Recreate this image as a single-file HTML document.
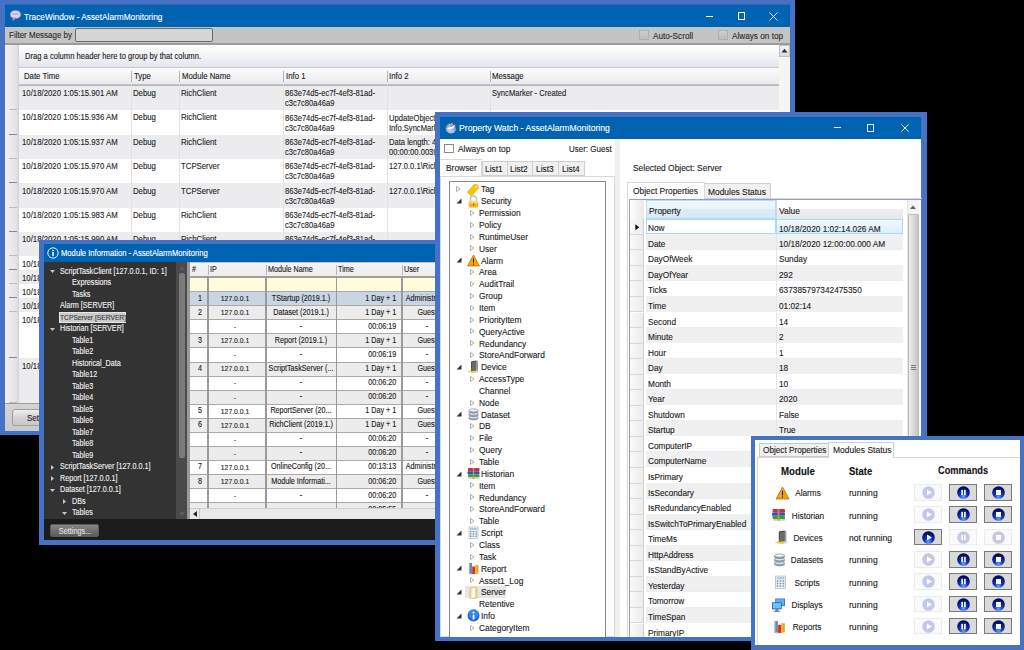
<!DOCTYPE html><html><head><meta charset="utf-8"><style>
html,body{margin:0;padding:0;}
body{width:1024px;height:650px;overflow:hidden;background:#000;position:relative;font-family:"Liberation Sans",sans-serif;}
body div, body svg{position:absolute;}
.t{white-space:nowrap;-webkit-text-stroke:0.12px currentColor;}
</style></head><body><div style="left:0px;top:0px;width:795px;height:434.6px;background:#4672c6"></div>
<div style="left:5px;top:5px;width:785px;height:21.5px;background:#0063b1"></div>
<div style="left:5px;top:4.2px;width:785px;height:1px;background:#3d62a8"></div>
<svg style="left:9px;top:9px" width="13" height="13" viewBox="0 0 13 13"><ellipse cx="6.5" cy="5.5" rx="5.5" ry="4.3" fill="#d8d4f0" stroke="#6a6890" stroke-width="0.8"/><path d="M4 9 L3.5 12 L7 9.3Z" fill="#d8d4f0" stroke="#6a6890" stroke-width="0.6"/><path d="M3.5 5 H9.5" stroke="#9a98c0" stroke-width="1"/></svg>
<div class="t" style="left:24px;top:11.12px;font-size:9.46px;line-height:11.35px;transform:scaleX(0.8772);transform-origin:left center;color:#fff">TraceWindow - AssetAlarmMonitoring</div>
<div style="left:706px;top:15.5px;width:7px;height:1px;background:#fff"></div>
<div style="left:738px;top:12px;width:7px;height:7.5px;border:1px solid #fff;box-sizing:border-box"></div>
<svg style="left:769px;top:12px" width="9" height="9" viewBox="0 0 9 9"><path d="M0.5 0.5 L8.5 8.5 M8.5 0.5 L0.5 8.5" stroke="#fff" stroke-width="1"/></svg>
<div style="left:5px;top:26.5px;width:785px;height:17px;background:#c4c4c4"></div>
<div style="left:5px;top:43px;width:785px;height:1.5px;background:#9c9c9c"></div>
<div class="t" style="left:9px;top:30.33px;font-size:9.12px;line-height:10.94px;transform:scaleX(0.8772);transform-origin:left center;color:#2a2a2a">Filter Message by</div>
<div style="left:75px;top:28.4px;width:138px;height:14px;background:#d6d6d6;border:1px solid #6a6a6a;border-bottom-width:1.4px;border-radius:2px;box-sizing:border-box"></div>
<div style="left:639px;top:30px;width:9.5px;height:10px;background:linear-gradient(#cfcfcf,#bdbdbd);border:1px solid #b0b0b0;box-sizing:border-box"></div>
<div class="t" style="left:653px;top:31.39px;font-size:9.35px;line-height:11.22px;transform:scaleX(0.8772);transform-origin:left center;color:#2a2a2a">Auto-Scroll</div>
<div style="left:718px;top:30px;width:9.5px;height:10px;background:linear-gradient(#cfcfcf,#bdbdbd);border:1px solid #b0b0b0;box-sizing:border-box"></div>
<div class="t" style="left:732px;top:31.39px;font-size:9.35px;line-height:11.22px;transform:scaleX(0.8772);transform-origin:left center;color:#2a2a2a">Always on top</div>
<div style="left:5px;top:44.5px;width:785px;height:386px;background:#fff"></div>
<div style="left:5px;top:44.5px;width:14px;height:359px;background:linear-gradient(90deg,#f2f2f4,#e4e4e8 80%,#d0d0d6)"></div>
<div style="left:19px;top:44.5px;width:760px;height:22.5px;background:linear-gradient(#ffffff,#e2e6ec)"></div>
<div style="left:19px;top:66.5px;width:760px;height:1px;background:#c8c8cc"></div>
<div class="t" style="left:25px;top:50.80px;font-size:8.66px;line-height:10.40px;transform:scaleX(0.8772);transform-origin:left center;color:#222">Drag a column header here to group by that column.</div>
<div style="left:19px;top:67.5px;width:760px;height:18px;background:linear-gradient(#fbfbfb,#e9e9ec)"></div>
<div style="left:19px;top:84px;width:760px;height:1.8px;background:linear-gradient(#c8c8ce,#b0b0b8)"></div>
<div style="left:131px;top:70.5px;width:1px;height:11px;background:#b4b4c0"></div>
<div style="left:179px;top:70.5px;width:1px;height:11px;background:#b4b4c0"></div>
<div style="left:283px;top:70.5px;width:1px;height:11px;background:#b4b4c0"></div>
<div style="left:386.5px;top:70.5px;width:1px;height:11px;background:#b4b4c0"></div>
<div style="left:490px;top:70.5px;width:1px;height:11px;background:#b4b4c0"></div>
<div class="t" style="left:24px;top:71.16px;font-size:8.89px;line-height:10.67px;transform:scaleX(0.8772);transform-origin:left center;color:#222">Date Time</div>
<div class="t" style="left:134px;top:71.16px;font-size:8.89px;line-height:10.67px;transform:scaleX(0.8772);transform-origin:left center;color:#222">Type</div>
<div class="t" style="left:182px;top:71.16px;font-size:8.89px;line-height:10.67px;transform:scaleX(0.8772);transform-origin:left center;color:#222">Module Name</div>
<div class="t" style="left:286px;top:71.16px;font-size:8.89px;line-height:10.67px;transform:scaleX(0.8772);transform-origin:left center;color:#222">Info 1</div>
<div class="t" style="left:389px;top:71.16px;font-size:8.89px;line-height:10.67px;transform:scaleX(0.8772);transform-origin:left center;color:#222">Info 2</div>
<div class="t" style="left:492px;top:71.16px;font-size:8.89px;line-height:10.67px;transform:scaleX(0.8772);transform-origin:left center;color:#222">Message</div>
<div style="left:19px;top:85.8px;width:760px;height:24.36px;background:#ececee"></div>
<div style="left:9px;top:109.16px;width:8px;height:1px;background:#b8b8c8"></div>
<div style="left:19px;top:110.16px;width:760px;height:24.359999999999985px;background:#ffffff"></div>
<div style="left:9px;top:133.51999999999998px;width:8px;height:1px;background:#8080a8"></div>
<div style="left:19px;top:134.51999999999998px;width:760px;height:24.360000000000014px;background:#ececee"></div>
<div style="left:9px;top:157.88px;width:8px;height:1px;background:#b8b8c8"></div>
<div style="left:19px;top:158.88px;width:760px;height:24.360000000000014px;background:#ffffff"></div>
<div style="left:9px;top:182.24px;width:8px;height:1px;background:#8080a8"></div>
<div style="left:19px;top:183.24px;width:760px;height:24.359999999999985px;background:#ececee"></div>
<div style="left:9px;top:206.6px;width:8px;height:1px;background:#b8b8c8"></div>
<div style="left:19px;top:207.6px;width:760px;height:24.359999999999985px;background:#ffffff"></div>
<div style="left:9px;top:230.95999999999998px;width:8px;height:1px;background:#8080a8"></div>
<div style="left:19px;top:231.95999999999998px;width:760px;height:24.360000000000014px;background:#ececee"></div>
<div style="left:9px;top:255.32px;width:8px;height:1px;background:#b8b8c8"></div>
<div style="left:19px;top:256.32px;width:760px;height:13.980000000000018px;background:#ffffff"></div>
<div style="left:9px;top:269.3px;width:8px;height:1px;background:#8080a8"></div>
<div style="left:19px;top:270.3px;width:760px;height:13.699999999999989px;background:#ececee"></div>
<div style="left:9px;top:283px;width:8px;height:1px;background:#b8b8c8"></div>
<div style="left:19px;top:284px;width:760px;height:14px;background:#ffffff"></div>
<div style="left:9px;top:297px;width:8px;height:1px;background:#8080a8"></div>
<div style="left:19px;top:298px;width:760px;height:13.800000000000011px;background:#ececee"></div>
<div style="left:9px;top:310.8px;width:8px;height:1px;background:#b8b8c8"></div>
<div style="left:19px;top:311.8px;width:760px;height:45.69999999999999px;background:#ffffff"></div>
<div style="left:9px;top:356.5px;width:8px;height:1px;background:#8080a8"></div>
<div style="left:19px;top:357.5px;width:760px;height:45.5px;background:#ececee"></div>
<div style="left:9px;top:402px;width:8px;height:1px;background:#b8b8c8"></div>
<div style="left:131px;top:85px;width:1px;height:318px;background:#e2e2e6"></div>
<div style="left:179px;top:85px;width:1px;height:318px;background:#e2e2e6"></div>
<div style="left:283px;top:85px;width:1px;height:318px;background:#e2e2e6"></div>
<div style="left:386.5px;top:85px;width:1px;height:318px;background:#e2e2e6"></div>
<div style="left:490px;top:85px;width:1px;height:318px;background:#e2e2e6"></div>
<div class="t" style="left:22px;top:88.06px;font-size:8.89px;line-height:10.67px;transform:scaleX(0.8772);transform-origin:left center;color:#1e1e1e">10/18/2020 1:05:15.901 AM</div>
<div class="t" style="left:133px;top:88.06px;font-size:8.89px;line-height:10.67px;transform:scaleX(0.8772);transform-origin:left center;color:#1e1e1e">Debug</div>
<div class="t" style="left:181px;top:88.06px;font-size:8.89px;line-height:10.67px;transform:scaleX(0.8772);transform-origin:left center;color:#1e1e1e">RichClient</div>
<div class="t" style="left:285px;top:88.20px;font-size:8.66px;line-height:10.40px;transform:scaleX(0.8772);transform-origin:left center;color:#1e1e1e">863e74d5-ec7f-4ef3-81ad-</div>
<div class="t" style="left:285px;top:98.40px;font-size:8.66px;line-height:10.40px;transform:scaleX(0.8772);transform-origin:left center;color:#1e1e1e">c3c7c80a46a9</div>
<div class="t" style="left:22px;top:112.42px;font-size:8.89px;line-height:10.67px;transform:scaleX(0.8772);transform-origin:left center;color:#1e1e1e">10/18/2020 1:05:15.936 AM</div>
<div class="t" style="left:133px;top:112.42px;font-size:8.89px;line-height:10.67px;transform:scaleX(0.8772);transform-origin:left center;color:#1e1e1e">Debug</div>
<div class="t" style="left:181px;top:112.42px;font-size:8.89px;line-height:10.67px;transform:scaleX(0.8772);transform-origin:left center;color:#1e1e1e">RichClient</div>
<div class="t" style="left:285px;top:112.56px;font-size:8.66px;line-height:10.40px;transform:scaleX(0.8772);transform-origin:left center;color:#1e1e1e">863e74d5-ec7f-4ef3-81ad-</div>
<div class="t" style="left:285px;top:122.76px;font-size:8.66px;line-height:10.40px;transform:scaleX(0.8772);transform-origin:left center;color:#1e1e1e">c3c7c80a46a9</div>
<div style="left:387px;top:110.16px;width:102px;height:24px;overflow:hidden;">
<div class="t" style="left:2px;top:2.60px;font-size:8.66px;line-height:10.40px;transform:scaleX(0.8772);transform-origin:left center;color:#1e1e1e">UpdateObject</div>
<div class="t" style="left:2px;top:12.80px;font-size:8.66px;line-height:10.40px;transform:scaleX(0.8772);transform-origin:left center;color:#1e1e1e">Info.SyncMark</div>
</div>
<div class="t" style="left:22px;top:136.78px;font-size:8.89px;line-height:10.67px;transform:scaleX(0.8772);transform-origin:left center;color:#1e1e1e">10/18/2020 1:05:15.937 AM</div>
<div class="t" style="left:133px;top:136.78px;font-size:8.89px;line-height:10.67px;transform:scaleX(0.8772);transform-origin:left center;color:#1e1e1e">Debug</div>
<div class="t" style="left:181px;top:136.78px;font-size:8.89px;line-height:10.67px;transform:scaleX(0.8772);transform-origin:left center;color:#1e1e1e">RichClient</div>
<div class="t" style="left:285px;top:136.92px;font-size:8.66px;line-height:10.40px;transform:scaleX(0.8772);transform-origin:left center;color:#1e1e1e">863e74d5-ec7f-4ef3-81ad-</div>
<div class="t" style="left:285px;top:147.12px;font-size:8.66px;line-height:10.40px;transform:scaleX(0.8772);transform-origin:left center;color:#1e1e1e">c3c7c80a46a9</div>
<div style="left:387px;top:134.51999999999998px;width:102px;height:24px;overflow:hidden;">
<div class="t" style="left:2px;top:2.60px;font-size:8.66px;line-height:10.40px;transform:scaleX(0.8772);transform-origin:left center;color:#1e1e1e">Data length: 4</div>
<div class="t" style="left:2px;top:12.80px;font-size:8.66px;line-height:10.40px;transform:scaleX(0.8772);transform-origin:left center;color:#1e1e1e">00:00:00.0039</div>
</div>
<div class="t" style="left:22px;top:161.14px;font-size:8.89px;line-height:10.67px;transform:scaleX(0.8772);transform-origin:left center;color:#1e1e1e">10/18/2020 1:05:15.970 AM</div>
<div class="t" style="left:133px;top:161.14px;font-size:8.89px;line-height:10.67px;transform:scaleX(0.8772);transform-origin:left center;color:#1e1e1e">Debug</div>
<div class="t" style="left:181px;top:161.14px;font-size:8.89px;line-height:10.67px;transform:scaleX(0.8772);transform-origin:left center;color:#1e1e1e">TCPServer</div>
<div class="t" style="left:285px;top:161.28px;font-size:8.66px;line-height:10.40px;transform:scaleX(0.8772);transform-origin:left center;color:#1e1e1e">863e74d5-ec7f-4ef3-81ad-</div>
<div class="t" style="left:285px;top:171.48px;font-size:8.66px;line-height:10.40px;transform:scaleX(0.8772);transform-origin:left center;color:#1e1e1e">c3c7c80a46a9</div>
<div style="left:387px;top:158.88px;width:102px;height:24px;overflow:hidden;">
<div class="t" style="left:2px;top:2.60px;font-size:8.66px;line-height:10.40px;transform:scaleX(0.8772);transform-origin:left center;color:#1e1e1e">127.0.0.1\Rich</div>
</div>
<div class="t" style="left:22px;top:185.50px;font-size:8.89px;line-height:10.67px;transform:scaleX(0.8772);transform-origin:left center;color:#1e1e1e">10/18/2020 1:05:15.970 AM</div>
<div class="t" style="left:133px;top:185.50px;font-size:8.89px;line-height:10.67px;transform:scaleX(0.8772);transform-origin:left center;color:#1e1e1e">Debug</div>
<div class="t" style="left:181px;top:185.50px;font-size:8.89px;line-height:10.67px;transform:scaleX(0.8772);transform-origin:left center;color:#1e1e1e">TCPServer</div>
<div class="t" style="left:285px;top:185.64px;font-size:8.66px;line-height:10.40px;transform:scaleX(0.8772);transform-origin:left center;color:#1e1e1e">863e74d5-ec7f-4ef3-81ad-</div>
<div class="t" style="left:285px;top:195.84px;font-size:8.66px;line-height:10.40px;transform:scaleX(0.8772);transform-origin:left center;color:#1e1e1e">c3c7c80a46a9</div>
<div style="left:387px;top:183.24px;width:102px;height:24px;overflow:hidden;">
<div class="t" style="left:2px;top:2.60px;font-size:8.66px;line-height:10.40px;transform:scaleX(0.8772);transform-origin:left center;color:#1e1e1e">127.0.0.1\Rich</div>
</div>
<div class="t" style="left:22px;top:209.86px;font-size:8.89px;line-height:10.67px;transform:scaleX(0.8772);transform-origin:left center;color:#1e1e1e">10/18/2020 1:05:15.983 AM</div>
<div class="t" style="left:133px;top:209.86px;font-size:8.89px;line-height:10.67px;transform:scaleX(0.8772);transform-origin:left center;color:#1e1e1e">Debug</div>
<div class="t" style="left:181px;top:209.86px;font-size:8.89px;line-height:10.67px;transform:scaleX(0.8772);transform-origin:left center;color:#1e1e1e">RichClient</div>
<div class="t" style="left:285px;top:210.00px;font-size:8.66px;line-height:10.40px;transform:scaleX(0.8772);transform-origin:left center;color:#1e1e1e">863e74d5-ec7f-4ef3-81ad-</div>
<div class="t" style="left:285px;top:220.20px;font-size:8.66px;line-height:10.40px;transform:scaleX(0.8772);transform-origin:left center;color:#1e1e1e">c3c7c80a46a9</div>
<div class="t" style="left:22px;top:234.22px;font-size:8.89px;line-height:10.67px;transform:scaleX(0.8772);transform-origin:left center;color:#1e1e1e">10/18/2020 1:05:15.990 AM</div>
<div class="t" style="left:133px;top:234.22px;font-size:8.89px;line-height:10.67px;transform:scaleX(0.8772);transform-origin:left center;color:#1e1e1e">Debug</div>
<div class="t" style="left:181px;top:234.22px;font-size:8.89px;line-height:10.67px;transform:scaleX(0.8772);transform-origin:left center;color:#1e1e1e">RichClient</div>
<div class="t" style="left:285px;top:234.36px;font-size:8.66px;line-height:10.40px;transform:scaleX(0.8772);transform-origin:left center;color:#1e1e1e">863e74d5-ec7f-4ef3-81ad-</div>
<div class="t" style="left:285px;top:244.56px;font-size:8.66px;line-height:10.40px;transform:scaleX(0.8772);transform-origin:left center;color:#1e1e1e">c3c7c80a46a9</div>
<div class="t" style="left:492px;top:88.40px;font-size:8.66px;line-height:10.40px;transform:scaleX(0.8772);transform-origin:left center;color:#1e1e1e">SyncMarker - Created</div>
<div class="t" style="left:22px;top:258.98px;font-size:8.89px;line-height:10.67px;transform:scaleX(0.8772);transform-origin:left center;color:#1e1e1e">10/18/2020 1:05:15.990 AM</div>
<div class="t" style="left:22px;top:272.96px;font-size:8.89px;line-height:10.67px;transform:scaleX(0.8772);transform-origin:left center;color:#1e1e1e">10/18/2020 1:05:15.990 AM</div>
<div class="t" style="left:22px;top:286.66px;font-size:8.89px;line-height:10.67px;transform:scaleX(0.8772);transform-origin:left center;color:#1e1e1e">10/18/2020 1:05:15.990 AM</div>
<div class="t" style="left:22px;top:300.66px;font-size:8.89px;line-height:10.67px;transform:scaleX(0.8772);transform-origin:left center;color:#1e1e1e">10/18/2020 1:05:15.990 AM</div>
<div class="t" style="left:22px;top:315.16px;font-size:8.89px;line-height:10.67px;transform:scaleX(0.8772);transform-origin:left center;color:#1e1e1e">10/18/2020 1:05:15.990 AM</div>
<div class="t" style="left:22px;top:360.86px;font-size:8.89px;line-height:10.67px;transform:scaleX(0.8772);transform-origin:left center;color:#1e1e1e">10/18/2020 1:05:15.990 AM</div>
<div style="left:779px;top:44.5px;width:11px;height:359px;background:#f6f6f0"></div>
<div style="left:779px;top:45px;width:11px;height:12px;background:linear-gradient(#f4f4f6,#dadae0);border:1px solid #c0c0c8;box-sizing:border-box"></div>
<svg style="left:781px;top:48px" width="7" height="5" viewBox="0 0 7 5"><path d="M0.5 4.5 L3.5 0.8 L6.5 4.5Z" fill="#333"/></svg>
<div style="left:5px;top:403.5px;width:785px;height:27px;background:linear-gradient(#d4d4d4,#cacaca)"></div>
<div style="left:5px;top:403px;width:785px;height:1.2px;background:#a0a0a0"></div>
<div style="left:12.3px;top:409.2px;width:80px;height:16.6px;background:linear-gradient(#eeeeee,#d4d4d4 50%,#c8c8c8);border:1px solid #a0a0a0;border-radius:3px;box-sizing:border-box"></div>
<div class="t" style="left:26.5px;top:412.53px;font-size:9.12px;line-height:10.94px;transform:scaleX(0.8772);transform-origin:left center;color:#222">Settings...</div>
<div style="left:38.5px;top:239.7px;width:400px;height:305.3px;background:#4672c6"></div>
<div style="left:43.8px;top:244px;width:400px;height:18px;background:#0063b1"></div>
<svg style="left:47px;top:247px" width="12" height="12" viewBox="0 0 12 12"><circle cx="6" cy="6" r="5.2" fill="none" stroke="#e8eef8" stroke-width="1"/><rect x="5.3" y="5" width="1.5" height="4.2" fill="#fff"/><rect x="5.3" y="2.8" width="1.5" height="1.4" fill="#fff"/></svg>
<div class="t" style="left:60.5px;top:247.77px;font-size:8.72px;line-height:10.47px;transform:scaleX(0.8772);transform-origin:left center;color:#fff">Module Information - AssetAlarmMonitoring</div>
<div style="left:43.8px;top:262px;width:400px;height:257px;background:#333333"></div>
<div style="left:43.8px;top:519px;width:400px;height:21px;background:#1c1c1c"></div>
<div style="left:50.3px;top:523.8px;width:48.7px;height:13px;background:linear-gradient(#858585,#5c5c5c);border:1px solid #5a5a5a;border-radius:2px;box-sizing:border-box"></div>
<div class="t" style="left:-125.4px;width:400px;text-align:center;top:525.51px;font-size:8.32px;line-height:9.99px;transform:scaleX(0.8772);transform-origin:center center;color:#e0e0e0">Settings...</div>
<div class="t" style="left:60px;top:266.68px;font-size:8.21px;line-height:9.85px;transform:scaleX(0.8772);transform-origin:left center;color:#f0f0f0">ScriptTaskClient [127.0.0.1, ID: 1]</div>
<svg style="left:49.5px;top:270.1px" width="5" height="3.5" viewBox="0 0 5 3.5"><path d="M0 0 H5 L2.5 3Z" fill="#c8c8c8"/></svg>
<div class="t" style="left:72px;top:278.18px;font-size:8.21px;line-height:9.85px;transform:scaleX(0.8772);transform-origin:left center;color:#f0f0f0">Expressions</div>
<div class="t" style="left:72px;top:289.68px;font-size:8.21px;line-height:9.85px;transform:scaleX(0.8772);transform-origin:left center;color:#f0f0f0">Tasks</div>
<div class="t" style="left:60px;top:301.18px;font-size:8.21px;line-height:9.85px;transform:scaleX(0.8772);transform-origin:left center;color:#f0f0f0">Alarm [SERVER]</div>
<div style="left:59px;top:312.1px;width:67px;height:11px;background:#c9c9c9;border:1px solid #e8e8e8;box-sizing:border-box"></div>
<div class="t" style="left:60px;top:313.02px;font-size:7.64px;line-height:9.17px;transform:scaleX(0.8772);transform-origin:left center;color:#3a3a3a">TCPServer [SERVER]</div>
<div class="t" style="left:60px;top:324.18px;font-size:8.21px;line-height:9.85px;transform:scaleX(0.8772);transform-origin:left center;color:#f0f0f0">Historian [SERVER]</div>
<svg style="left:49.5px;top:327.6px" width="5" height="3.5" viewBox="0 0 5 3.5"><path d="M0 0 H5 L2.5 3Z" fill="#c8c8c8"/></svg>
<div class="t" style="left:72px;top:335.68px;font-size:8.21px;line-height:9.85px;transform:scaleX(0.8772);transform-origin:left center;color:#f0f0f0">Table1</div>
<div class="t" style="left:72px;top:347.18px;font-size:8.21px;line-height:9.85px;transform:scaleX(0.8772);transform-origin:left center;color:#f0f0f0">Table2</div>
<div class="t" style="left:72px;top:358.68px;font-size:8.21px;line-height:9.85px;transform:scaleX(0.8772);transform-origin:left center;color:#f0f0f0">Historical_Data</div>
<div class="t" style="left:72px;top:370.18px;font-size:8.21px;line-height:9.85px;transform:scaleX(0.8772);transform-origin:left center;color:#f0f0f0">Table12</div>
<div class="t" style="left:72px;top:381.68px;font-size:8.21px;line-height:9.85px;transform:scaleX(0.8772);transform-origin:left center;color:#f0f0f0">Table3</div>
<div class="t" style="left:72px;top:393.18px;font-size:8.21px;line-height:9.85px;transform:scaleX(0.8772);transform-origin:left center;color:#f0f0f0">Table4</div>
<div class="t" style="left:72px;top:404.68px;font-size:8.21px;line-height:9.85px;transform:scaleX(0.8772);transform-origin:left center;color:#f0f0f0">Table5</div>
<div class="t" style="left:72px;top:416.18px;font-size:8.21px;line-height:9.85px;transform:scaleX(0.8772);transform-origin:left center;color:#f0f0f0">Table6</div>
<div class="t" style="left:72px;top:427.68px;font-size:8.21px;line-height:9.85px;transform:scaleX(0.8772);transform-origin:left center;color:#f0f0f0">Table7</div>
<div class="t" style="left:72px;top:439.18px;font-size:8.21px;line-height:9.85px;transform:scaleX(0.8772);transform-origin:left center;color:#f0f0f0">Table8</div>
<div class="t" style="left:72px;top:450.68px;font-size:8.21px;line-height:9.85px;transform:scaleX(0.8772);transform-origin:left center;color:#f0f0f0">Table9</div>
<div class="t" style="left:60px;top:462.18px;font-size:8.21px;line-height:9.85px;transform:scaleX(0.8772);transform-origin:left center;color:#f0f0f0">ScriptTaskServer [127.0.0.1]</div>
<svg style="left:50.5px;top:464.6px" width="3.5" height="5" viewBox="0 0 3.5 5"><path d="M0 0 V5 L3 2.5Z" fill="#c8c8c8"/></svg>
<div class="t" style="left:60px;top:473.68px;font-size:8.21px;line-height:9.85px;transform:scaleX(0.8772);transform-origin:left center;color:#f0f0f0">Report [127.0.0.1]</div>
<svg style="left:50.5px;top:476.1px" width="3.5" height="5" viewBox="0 0 3.5 5"><path d="M0 0 V5 L3 2.5Z" fill="#c8c8c8"/></svg>
<div class="t" style="left:60px;top:485.18px;font-size:8.21px;line-height:9.85px;transform:scaleX(0.8772);transform-origin:left center;color:#f0f0f0">Dataset [127.0.0.1]</div>
<svg style="left:49.5px;top:488.6px" width="5" height="3.5" viewBox="0 0 5 3.5"><path d="M0 0 H5 L2.5 3Z" fill="#c8c8c8"/></svg>
<div class="t" style="left:72px;top:496.68px;font-size:8.21px;line-height:9.85px;transform:scaleX(0.8772);transform-origin:left center;color:#f0f0f0">DBs</div>
<svg style="left:62.5px;top:499.1px" width="3.5" height="5" viewBox="0 0 3.5 5"><path d="M0 0 V5 L3 2.5Z" fill="#c8c8c8"/></svg>
<div class="t" style="left:72px;top:508.18px;font-size:8.21px;line-height:9.85px;transform:scaleX(0.8772);transform-origin:left center;color:#f0f0f0">Tables</div>
<svg style="left:61.5px;top:511.6px" width="5" height="3.5" viewBox="0 0 5 3.5"><path d="M0 0 H5 L2.5 3Z" fill="#c8c8c8"/></svg>
<div style="left:176px;top:262px;width:11px;height:257px;background:#4a4a4a"></div>
<div style="left:179.4px;top:273px;width:5.2px;height:185px;background:#7c7c7c;border-radius:2.6px"></div>
<div style="left:187px;top:262px;width:2.5px;height:257px;background:#9a9a9a"></div>
<svg style="left:179px;top:265px" width="6" height="5" viewBox="0 0 6 5"><path d="M0 5 L3 0 L6 5Z" fill="#5a5a5a"/></svg>
<svg style="left:179px;top:512px" width="6" height="5" viewBox="0 0 6 5"><path d="M0 0 L3 5 L6 0Z" fill="#5a5a5a"/></svg>
<div style="left:189.5px;top:262.3px;width:250px;height:256.7px;overflow:hidden;background:#fff">
<div style="left:0px;top:0px;width:250px;height:15px;background:linear-gradient(#f4f4f4,#ececec);border-top:1px solid #c0c0c0;box-sizing:border-box"></div>
<div style="left:0px;top:15px;width:250px;height:14px;background:#fffbdc"></div>
<div style="left:0px;top:29.0px;width:250px;height:14.05px;background:#c8d5e3"></div>
<div style="left:0px;top:29.0px;width:250px;height:1px;background:#a9a9a9"></div>
<div class="t" style="left:-189.8px;width:400px;text-align:center;top:31.60px;font-size:8.21px;line-height:9.85px;transform:scaleX(0.8772);transform-origin:center center;color:#1a1a1a">1</div>
<div class="t" style="left:-154.5px;width:400px;text-align:center;top:31.87px;font-size:7.75px;line-height:9.30px;transform:scaleX(0.8772);transform-origin:center center;color:#1a1a1a">127.0.0.1</div>
<div class="t" style="left:-88.5px;width:400px;text-align:center;top:31.60px;font-size:8.21px;line-height:9.85px;transform:scaleX(0.8772);transform-origin:center center;color:#1a1a1a">TStartup (2019.1.)</div>
<div class="t" style="left:146.8px;width:60.19999999999999px;text-align:right;top:31.60px;font-size:8.21px;line-height:9.85px;transform:scaleX(0.8772);transform-origin:right center;color:#1a1a1a">1 Day + 1</div>
<div class="t" style="left:37.5px;width:400px;text-align:center;top:31.60px;font-size:8.21px;line-height:9.85px;transform:scaleX(0.8772);transform-origin:center center;color:#1a1a1a">Administrator</div>
<div style="left:0px;top:43.05000000000001px;width:250px;height:14.05px;background:#ececec"></div>
<div style="left:0px;top:43.05000000000001px;width:250px;height:1px;background:#a9a9a9"></div>
<div class="t" style="left:-189.8px;width:400px;text-align:center;top:45.65px;font-size:8.21px;line-height:9.85px;transform:scaleX(0.8772);transform-origin:center center;color:#1a1a1a">2</div>
<div class="t" style="left:-154.5px;width:400px;text-align:center;top:45.92px;font-size:7.75px;line-height:9.30px;transform:scaleX(0.8772);transform-origin:center center;color:#1a1a1a">127.0.0.1</div>
<div class="t" style="left:-88.5px;width:400px;text-align:center;top:45.65px;font-size:8.21px;line-height:9.85px;transform:scaleX(0.8772);transform-origin:center center;color:#1a1a1a">Dataset (2019.1.)</div>
<div class="t" style="left:146.8px;width:60.19999999999999px;text-align:right;top:45.65px;font-size:8.21px;line-height:9.85px;transform:scaleX(0.8772);transform-origin:right center;color:#1a1a1a">1 Day + 1</div>
<div class="t" style="left:37.5px;width:400px;text-align:center;top:45.65px;font-size:8.21px;line-height:9.85px;transform:scaleX(0.8772);transform-origin:center center;color:#1a1a1a">Guest</div>
<div style="left:0px;top:57.10000000000002px;width:250px;height:14.05px;background:#ffffff"></div>
<div style="left:0px;top:57.10000000000002px;width:250px;height:1px;background:#a9a9a9"></div>
<div class="t" style="left:-189.8px;width:400px;text-align:center;top:59.70px;font-size:8.21px;line-height:9.85px;transform:scaleX(0.8772);transform-origin:center center;color:#1a1a1a"></div>
<div class="t" style="left:-154.5px;width:400px;text-align:center;top:59.97px;font-size:7.75px;line-height:9.30px;transform:scaleX(0.8772);transform-origin:center center;color:#1a1a1a">-</div>
<div class="t" style="left:-88.5px;width:400px;text-align:center;top:59.70px;font-size:8.21px;line-height:9.85px;transform:scaleX(0.8772);transform-origin:center center;color:#1a1a1a">-</div>
<div class="t" style="left:146.8px;width:60.19999999999999px;text-align:right;top:59.70px;font-size:8.21px;line-height:9.85px;transform:scaleX(0.8772);transform-origin:right center;color:#1a1a1a">00:06:19</div>
<div class="t" style="left:37.5px;width:400px;text-align:center;top:59.70px;font-size:8.21px;line-height:9.85px;transform:scaleX(0.8772);transform-origin:center center;color:#1a1a1a">-</div>
<div style="left:0px;top:71.15000000000003px;width:250px;height:14.05px;background:#ececec"></div>
<div style="left:0px;top:71.15000000000003px;width:250px;height:1px;background:#a9a9a9"></div>
<div class="t" style="left:-189.8px;width:400px;text-align:center;top:73.75px;font-size:8.21px;line-height:9.85px;transform:scaleX(0.8772);transform-origin:center center;color:#1a1a1a">3</div>
<div class="t" style="left:-154.5px;width:400px;text-align:center;top:74.02px;font-size:7.75px;line-height:9.30px;transform:scaleX(0.8772);transform-origin:center center;color:#1a1a1a">127.0.0.1</div>
<div class="t" style="left:-88.5px;width:400px;text-align:center;top:73.75px;font-size:8.21px;line-height:9.85px;transform:scaleX(0.8772);transform-origin:center center;color:#1a1a1a">Report (2019.1.)</div>
<div class="t" style="left:146.8px;width:60.19999999999999px;text-align:right;top:73.75px;font-size:8.21px;line-height:9.85px;transform:scaleX(0.8772);transform-origin:right center;color:#1a1a1a">1 Day + 1</div>
<div class="t" style="left:37.5px;width:400px;text-align:center;top:73.75px;font-size:8.21px;line-height:9.85px;transform:scaleX(0.8772);transform-origin:center center;color:#1a1a1a">Guest</div>
<div style="left:0px;top:85.19999999999999px;width:250px;height:14.05px;background:#ffffff"></div>
<div style="left:0px;top:85.19999999999999px;width:250px;height:1px;background:#a9a9a9"></div>
<div class="t" style="left:-189.8px;width:400px;text-align:center;top:87.80px;font-size:8.21px;line-height:9.85px;transform:scaleX(0.8772);transform-origin:center center;color:#1a1a1a"></div>
<div class="t" style="left:-154.5px;width:400px;text-align:center;top:88.07px;font-size:7.75px;line-height:9.30px;transform:scaleX(0.8772);transform-origin:center center;color:#1a1a1a">-</div>
<div class="t" style="left:-88.5px;width:400px;text-align:center;top:87.80px;font-size:8.21px;line-height:9.85px;transform:scaleX(0.8772);transform-origin:center center;color:#1a1a1a">-</div>
<div class="t" style="left:146.8px;width:60.19999999999999px;text-align:right;top:87.80px;font-size:8.21px;line-height:9.85px;transform:scaleX(0.8772);transform-origin:right center;color:#1a1a1a">00:06:19</div>
<div class="t" style="left:37.5px;width:400px;text-align:center;top:87.80px;font-size:8.21px;line-height:9.85px;transform:scaleX(0.8772);transform-origin:center center;color:#1a1a1a">-</div>
<div style="left:0px;top:99.25px;width:250px;height:14.05px;background:#ececec"></div>
<div style="left:0px;top:99.25px;width:250px;height:1px;background:#a9a9a9"></div>
<div class="t" style="left:-189.8px;width:400px;text-align:center;top:101.85px;font-size:8.21px;line-height:9.85px;transform:scaleX(0.8772);transform-origin:center center;color:#1a1a1a">4</div>
<div class="t" style="left:-154.5px;width:400px;text-align:center;top:102.12px;font-size:7.75px;line-height:9.30px;transform:scaleX(0.8772);transform-origin:center center;color:#1a1a1a">127.0.0.1</div>
<div class="t" style="left:-88.5px;width:400px;text-align:center;top:101.85px;font-size:8.21px;line-height:9.85px;transform:scaleX(0.8772);transform-origin:center center;color:#1a1a1a">ScriptTaskServer (...</div>
<div class="t" style="left:146.8px;width:60.19999999999999px;text-align:right;top:101.85px;font-size:8.21px;line-height:9.85px;transform:scaleX(0.8772);transform-origin:right center;color:#1a1a1a">1 Day + 1</div>
<div class="t" style="left:37.5px;width:400px;text-align:center;top:101.85px;font-size:8.21px;line-height:9.85px;transform:scaleX(0.8772);transform-origin:center center;color:#1a1a1a">Guest</div>
<div style="left:0px;top:113.30000000000001px;width:250px;height:14.05px;background:#ffffff"></div>
<div style="left:0px;top:113.30000000000001px;width:250px;height:1px;background:#a9a9a9"></div>
<div class="t" style="left:-189.8px;width:400px;text-align:center;top:115.90px;font-size:8.21px;line-height:9.85px;transform:scaleX(0.8772);transform-origin:center center;color:#1a1a1a"></div>
<div class="t" style="left:-154.5px;width:400px;text-align:center;top:116.17px;font-size:7.75px;line-height:9.30px;transform:scaleX(0.8772);transform-origin:center center;color:#1a1a1a">-</div>
<div class="t" style="left:-88.5px;width:400px;text-align:center;top:115.90px;font-size:8.21px;line-height:9.85px;transform:scaleX(0.8772);transform-origin:center center;color:#1a1a1a">-</div>
<div class="t" style="left:146.8px;width:60.19999999999999px;text-align:right;top:115.90px;font-size:8.21px;line-height:9.85px;transform:scaleX(0.8772);transform-origin:right center;color:#1a1a1a">00:06:20</div>
<div class="t" style="left:37.5px;width:400px;text-align:center;top:115.90px;font-size:8.21px;line-height:9.85px;transform:scaleX(0.8772);transform-origin:center center;color:#1a1a1a">-</div>
<div style="left:0px;top:127.35000000000002px;width:250px;height:14.05px;background:#ececec"></div>
<div style="left:0px;top:127.35000000000002px;width:250px;height:1px;background:#a9a9a9"></div>
<div class="t" style="left:-189.8px;width:400px;text-align:center;top:129.95px;font-size:8.21px;line-height:9.85px;transform:scaleX(0.8772);transform-origin:center center;color:#1a1a1a"></div>
<div class="t" style="left:-154.5px;width:400px;text-align:center;top:130.22px;font-size:7.75px;line-height:9.30px;transform:scaleX(0.8772);transform-origin:center center;color:#1a1a1a">-</div>
<div class="t" style="left:-88.5px;width:400px;text-align:center;top:129.95px;font-size:8.21px;line-height:9.85px;transform:scaleX(0.8772);transform-origin:center center;color:#1a1a1a">-</div>
<div class="t" style="left:146.8px;width:60.19999999999999px;text-align:right;top:129.95px;font-size:8.21px;line-height:9.85px;transform:scaleX(0.8772);transform-origin:right center;color:#1a1a1a">00:06:20</div>
<div class="t" style="left:37.5px;width:400px;text-align:center;top:129.95px;font-size:8.21px;line-height:9.85px;transform:scaleX(0.8772);transform-origin:center center;color:#1a1a1a">-</div>
<div style="left:0px;top:141.40000000000003px;width:250px;height:14.05px;background:#ffffff"></div>
<div style="left:0px;top:141.40000000000003px;width:250px;height:1px;background:#a9a9a9"></div>
<div class="t" style="left:-189.8px;width:400px;text-align:center;top:144.00px;font-size:8.21px;line-height:9.85px;transform:scaleX(0.8772);transform-origin:center center;color:#1a1a1a">5</div>
<div class="t" style="left:-154.5px;width:400px;text-align:center;top:144.27px;font-size:7.75px;line-height:9.30px;transform:scaleX(0.8772);transform-origin:center center;color:#1a1a1a">127.0.0.1</div>
<div class="t" style="left:-88.5px;width:400px;text-align:center;top:144.00px;font-size:8.21px;line-height:9.85px;transform:scaleX(0.8772);transform-origin:center center;color:#1a1a1a">ReportServer (20...</div>
<div class="t" style="left:146.8px;width:60.19999999999999px;text-align:right;top:144.00px;font-size:8.21px;line-height:9.85px;transform:scaleX(0.8772);transform-origin:right center;color:#1a1a1a">1 Day + 1</div>
<div class="t" style="left:37.5px;width:400px;text-align:center;top:144.00px;font-size:8.21px;line-height:9.85px;transform:scaleX(0.8772);transform-origin:center center;color:#1a1a1a">Guest</div>
<div style="left:0px;top:155.45px;width:250px;height:14.05px;background:#ececec"></div>
<div style="left:0px;top:155.45px;width:250px;height:1px;background:#a9a9a9"></div>
<div class="t" style="left:-189.8px;width:400px;text-align:center;top:158.05px;font-size:8.21px;line-height:9.85px;transform:scaleX(0.8772);transform-origin:center center;color:#1a1a1a">6</div>
<div class="t" style="left:-154.5px;width:400px;text-align:center;top:158.32px;font-size:7.75px;line-height:9.30px;transform:scaleX(0.8772);transform-origin:center center;color:#1a1a1a">127.0.0.1</div>
<div class="t" style="left:-88.5px;width:400px;text-align:center;top:158.05px;font-size:8.21px;line-height:9.85px;transform:scaleX(0.8772);transform-origin:center center;color:#1a1a1a">RichClient (2019.1.)</div>
<div class="t" style="left:146.8px;width:60.19999999999999px;text-align:right;top:158.05px;font-size:8.21px;line-height:9.85px;transform:scaleX(0.8772);transform-origin:right center;color:#1a1a1a">1 Day + 1</div>
<div class="t" style="left:37.5px;width:400px;text-align:center;top:158.05px;font-size:8.21px;line-height:9.85px;transform:scaleX(0.8772);transform-origin:center center;color:#1a1a1a">Guest</div>
<div style="left:0px;top:169.5px;width:250px;height:14.05px;background:#ffffff"></div>
<div style="left:0px;top:169.5px;width:250px;height:1px;background:#a9a9a9"></div>
<div class="t" style="left:-189.8px;width:400px;text-align:center;top:172.10px;font-size:8.21px;line-height:9.85px;transform:scaleX(0.8772);transform-origin:center center;color:#1a1a1a"></div>
<div class="t" style="left:-154.5px;width:400px;text-align:center;top:172.37px;font-size:7.75px;line-height:9.30px;transform:scaleX(0.8772);transform-origin:center center;color:#1a1a1a">-</div>
<div class="t" style="left:-88.5px;width:400px;text-align:center;top:172.10px;font-size:8.21px;line-height:9.85px;transform:scaleX(0.8772);transform-origin:center center;color:#1a1a1a">-</div>
<div class="t" style="left:146.8px;width:60.19999999999999px;text-align:right;top:172.10px;font-size:8.21px;line-height:9.85px;transform:scaleX(0.8772);transform-origin:right center;color:#1a1a1a">00:06:20</div>
<div class="t" style="left:37.5px;width:400px;text-align:center;top:172.10px;font-size:8.21px;line-height:9.85px;transform:scaleX(0.8772);transform-origin:center center;color:#1a1a1a">-</div>
<div style="left:0px;top:183.55px;width:250px;height:14.05px;background:#ececec"></div>
<div style="left:0px;top:183.55px;width:250px;height:1px;background:#a9a9a9"></div>
<div class="t" style="left:-189.8px;width:400px;text-align:center;top:186.15px;font-size:8.21px;line-height:9.85px;transform:scaleX(0.8772);transform-origin:center center;color:#1a1a1a"></div>
<div class="t" style="left:-154.5px;width:400px;text-align:center;top:186.42px;font-size:7.75px;line-height:9.30px;transform:scaleX(0.8772);transform-origin:center center;color:#1a1a1a">-</div>
<div class="t" style="left:-88.5px;width:400px;text-align:center;top:186.15px;font-size:8.21px;line-height:9.85px;transform:scaleX(0.8772);transform-origin:center center;color:#1a1a1a">-</div>
<div class="t" style="left:146.8px;width:60.19999999999999px;text-align:right;top:186.15px;font-size:8.21px;line-height:9.85px;transform:scaleX(0.8772);transform-origin:right center;color:#1a1a1a">00:06:20</div>
<div class="t" style="left:37.5px;width:400px;text-align:center;top:186.15px;font-size:8.21px;line-height:9.85px;transform:scaleX(0.8772);transform-origin:center center;color:#1a1a1a">-</div>
<div style="left:0px;top:197.60000000000002px;width:250px;height:14.05px;background:#ffffff"></div>
<div style="left:0px;top:197.60000000000002px;width:250px;height:1px;background:#a9a9a9"></div>
<div class="t" style="left:-189.8px;width:400px;text-align:center;top:200.20px;font-size:8.21px;line-height:9.85px;transform:scaleX(0.8772);transform-origin:center center;color:#1a1a1a">7</div>
<div class="t" style="left:-154.5px;width:400px;text-align:center;top:200.47px;font-size:7.75px;line-height:9.30px;transform:scaleX(0.8772);transform-origin:center center;color:#1a1a1a">127.0.0.1</div>
<div class="t" style="left:-88.5px;width:400px;text-align:center;top:200.20px;font-size:8.21px;line-height:9.85px;transform:scaleX(0.8772);transform-origin:center center;color:#1a1a1a">OnlineConfig (20...</div>
<div class="t" style="left:146.8px;width:60.19999999999999px;text-align:right;top:200.20px;font-size:8.21px;line-height:9.85px;transform:scaleX(0.8772);transform-origin:right center;color:#1a1a1a">00:13:13</div>
<div class="t" style="left:37.5px;width:400px;text-align:center;top:200.20px;font-size:8.21px;line-height:9.85px;transform:scaleX(0.8772);transform-origin:center center;color:#1a1a1a">Administrator</div>
<div style="left:0px;top:211.65000000000003px;width:250px;height:14.05px;background:#ececec"></div>
<div style="left:0px;top:211.65000000000003px;width:250px;height:1px;background:#a9a9a9"></div>
<div class="t" style="left:-189.8px;width:400px;text-align:center;top:214.25px;font-size:8.21px;line-height:9.85px;transform:scaleX(0.8772);transform-origin:center center;color:#1a1a1a">8</div>
<div class="t" style="left:-154.5px;width:400px;text-align:center;top:214.52px;font-size:7.75px;line-height:9.30px;transform:scaleX(0.8772);transform-origin:center center;color:#1a1a1a">127.0.0.1</div>
<div class="t" style="left:-88.5px;width:400px;text-align:center;top:214.25px;font-size:8.21px;line-height:9.85px;transform:scaleX(0.8772);transform-origin:center center;color:#1a1a1a">Module Informati...</div>
<div class="t" style="left:146.8px;width:60.19999999999999px;text-align:right;top:214.25px;font-size:8.21px;line-height:9.85px;transform:scaleX(0.8772);transform-origin:right center;color:#1a1a1a">00:06:20</div>
<div class="t" style="left:37.5px;width:400px;text-align:center;top:214.25px;font-size:8.21px;line-height:9.85px;transform:scaleX(0.8772);transform-origin:center center;color:#1a1a1a">Guest</div>
<div style="left:0px;top:225.7px;width:250px;height:14.05px;background:#ffffff"></div>
<div style="left:0px;top:225.7px;width:250px;height:1px;background:#a9a9a9"></div>
<div class="t" style="left:-189.8px;width:400px;text-align:center;top:228.30px;font-size:8.21px;line-height:9.85px;transform:scaleX(0.8772);transform-origin:center center;color:#1a1a1a"></div>
<div class="t" style="left:-154.5px;width:400px;text-align:center;top:228.57px;font-size:7.75px;line-height:9.30px;transform:scaleX(0.8772);transform-origin:center center;color:#1a1a1a">-</div>
<div class="t" style="left:-88.5px;width:400px;text-align:center;top:228.30px;font-size:8.21px;line-height:9.85px;transform:scaleX(0.8772);transform-origin:center center;color:#1a1a1a">-</div>
<div class="t" style="left:146.8px;width:60.19999999999999px;text-align:right;top:228.30px;font-size:8.21px;line-height:9.85px;transform:scaleX(0.8772);transform-origin:right center;color:#1a1a1a">00:06:20</div>
<div class="t" style="left:37.5px;width:400px;text-align:center;top:228.30px;font-size:8.21px;line-height:9.85px;transform:scaleX(0.8772);transform-origin:center center;color:#1a1a1a">-</div>
<div style="left:0px;top:239.75px;width:250px;height:14.05px;background:#ececec"></div>
<div style="left:0px;top:239.75px;width:250px;height:1px;background:#a9a9a9"></div>
<div class="t" style="left:-189.8px;width:400px;text-align:center;top:242.35px;font-size:8.21px;line-height:9.85px;transform:scaleX(0.8772);transform-origin:center center;color:#1a1a1a"></div>
<div class="t" style="left:-154.5px;width:400px;text-align:center;top:242.62px;font-size:7.75px;line-height:9.30px;transform:scaleX(0.8772);transform-origin:center center;color:#1a1a1a"></div>
<div class="t" style="left:-88.5px;width:400px;text-align:center;top:242.35px;font-size:8.21px;line-height:9.85px;transform:scaleX(0.8772);transform-origin:center center;color:#1a1a1a"></div>
<div class="t" style="left:146.8px;width:60.19999999999999px;text-align:right;top:242.35px;font-size:8.21px;line-height:9.85px;transform:scaleX(0.8772);transform-origin:right center;color:#1a1a1a">00:05:55</div>
<div class="t" style="left:37.5px;width:400px;text-align:center;top:242.35px;font-size:8.21px;line-height:9.85px;transform:scaleX(0.8772);transform-origin:center center;color:#1a1a1a"></div>
<div style="left:0px;top:14px;width:250px;height:1.5px;background:#a0a0a0"></div>
<div style="left:17.5px;top:14px;width:1.5px;height:245px;background:#9a9a9a"></div>
<div style="left:75.80000000000001px;top:14px;width:1.5px;height:245px;background:#9a9a9a"></div>
<div style="left:146.3px;top:14px;width:1.5px;height:245px;background:#9a9a9a"></div>
<div style="left:211.60000000000002px;top:14px;width:1.5px;height:245px;background:#9a9a9a"></div>
<div style="left:262.0px;top:14px;width:1.5px;height:245px;background:#9a9a9a"></div>
<div style="left:18.0px;top:3px;width:1px;height:10px;background:#b8b8b8"></div>
<div style="left:76.30000000000001px;top:3px;width:1px;height:10px;background:#b8b8b8"></div>
<div style="left:146.8px;top:3px;width:1px;height:10px;background:#b8b8b8"></div>
<div style="left:212.10000000000002px;top:3px;width:1px;height:10px;background:#b8b8b8"></div>
<div style="left:262.5px;top:3px;width:1px;height:10px;background:#b8b8b8"></div>
<div class="t" style="left:2.0px;top:3.08px;font-size:8.21px;line-height:9.85px;transform:scaleX(0.8772);transform-origin:left center;color:#1a1a1a">#</div>
<div class="t" style="left:20.0px;top:3.08px;font-size:8.21px;line-height:9.85px;transform:scaleX(0.8772);transform-origin:left center;color:#1a1a1a">IP</div>
<div class="t" style="left:78.0px;top:3.08px;font-size:8.21px;line-height:9.85px;transform:scaleX(0.8772);transform-origin:left center;color:#1a1a1a">Module Name</div>
<div class="t" style="left:148.5px;top:3.08px;font-size:8.21px;line-height:9.85px;transform:scaleX(0.8772);transform-origin:left center;color:#1a1a1a">Time</div>
<div class="t" style="left:214.0px;top:3.08px;font-size:8.21px;line-height:9.85px;transform:scaleX(0.8772);transform-origin:left center;color:#1a1a1a">User</div>
<div style="left:0px;top:246.09999999999997px;width:250px;height:10.6px;background:#e9e9e9;border-top:1px solid #d0d0d0;box-sizing:border-box"></div>
<svg style="left:3px;top:248.7px" width="4" height="6" viewBox="0 0 4 6"><path d="M4 0 V6 L0 3Z" fill="#222"/></svg>
<div style="left:9px;top:246.09999999999997px;width:1px;height:10.6px;background:#c8c8c8"></div>
</div>
<div style="left:434.5px;top:112.3px;width:492.5px;height:528.7px;background:#4672c6"></div>
<div style="left:439.8px;top:117px;width:481.7px;height:22px;background:#0063b1"></div>
<svg style="left:444.5px;top:121.5px" width="12" height="12" viewBox="0 0 12 12"><defs><radialGradient id="gg" cx="0.45" cy="0.7" r="0.6"><stop offset="0" stop-color="#c8d8ec"/><stop offset="0.7" stop-color="#90a8c8"/><stop offset="1" stop-color="#40587a"/></radialGradient></defs><circle cx="6" cy="6" r="5.5" fill="url(#gg)"/><path d="M1.8 6.8 Q4 4.5 7 5 Q9 3.5 10.3 2.6 Q9.5 5.8 7.2 6.5 Q4.5 7.2 1.8 6.8Z" fill="#ffffff"/><path d="M2.5 3.5 Q5 1.6 8 2" stroke="#e0ecf8" stroke-width="0.8" fill="none"/></svg>
<div class="t" style="left:459.3px;top:122.09px;font-size:9.85px;line-height:11.82px;transform:scaleX(0.8772);transform-origin:left center;color:#fff">Property Watch - AssetAlarmMonitoring</div>
<div style="left:833.5px;top:127.3px;width:7px;height:1px;background:#e8f0f8"></div>
<div style="left:866.9px;top:124.4px;width:7.2px;height:7.2px;border:1px solid #dde8f4;box-sizing:border-box"></div>
<svg style="left:900.5px;top:124px" width="8" height="8" viewBox="0 0 8 8"><path d="M0.4 0.4 L7.6 7.6 M7.6 0.4 L0.4 7.6" stroke="#fff" stroke-width="1"/></svg>
<div style="left:439.8px;top:139px;width:481.7px;height:497.5px;background:#fff"></div>
<div style="left:0px;top:0px;width:1024px;height:636.5px;overflow:hidden;">
<div style="left:444.4px;top:144px;width:9.4px;height:9.2px;background:#fff;border:1px solid #8a8a8a;box-sizing:border-box"></div>
<div class="t" style="left:457.5px;top:142.85px;font-size:9.58px;line-height:11.49px;transform:scaleX(0.8772);transform-origin:left center;color:#1a1a1a">Always on top</div>
<div class="t" style="left:569px;top:143.53px;font-size:9.12px;line-height:10.94px;transform:scaleX(0.8772);transform-origin:left center;color:#1a1a1a">User: Guest</div>
<div style="left:440px;top:175.5px;width:175px;height:461px;border:1px solid #d9d9d9;box-sizing:border-box;background:#fff"></div>
<div style="left:481.5px;top:160.7px;width:26.0px;height:15px;background:#f0f0f0;border:1px solid #cfcfcf;box-sizing:border-box"></div>
<div class="t" style="left:485.0px;top:162.85px;font-size:9.58px;line-height:11.49px;transform:scaleX(0.8772);transform-origin:left center;color:#1a1a1a">List1</div>
<div style="left:506.5px;top:160.7px;width:26.5px;height:15px;background:#f0f0f0;border:1px solid #cfcfcf;box-sizing:border-box"></div>
<div class="t" style="left:510.0px;top:162.85px;font-size:9.58px;line-height:11.49px;transform:scaleX(0.8772);transform-origin:left center;color:#1a1a1a">List2</div>
<div style="left:532px;top:160.7px;width:27px;height:15px;background:#f0f0f0;border:1px solid #cfcfcf;box-sizing:border-box"></div>
<div class="t" style="left:535.5px;top:162.85px;font-size:9.58px;line-height:11.49px;transform:scaleX(0.8772);transform-origin:left center;color:#1a1a1a">List3</div>
<div style="left:558px;top:160.7px;width:27px;height:15px;background:#f0f0f0;border:1px solid #cfcfcf;box-sizing:border-box"></div>
<div class="t" style="left:561.5px;top:162.85px;font-size:9.58px;line-height:11.49px;transform:scaleX(0.8772);transform-origin:left center;color:#1a1a1a">List4</div>
<div style="left:439.8px;top:159px;width:42.2px;height:17px;background:#fff;border:1px solid #d9d9d9;border-bottom:none;border-left:none;box-sizing:border-box"></div>
<div class="t" style="left:445.5px;top:162.05px;font-size:9.58px;line-height:11.49px;transform:scaleX(0.8772);transform-origin:left center;color:#1a1a1a">Browser</div>
<div style="left:449.2px;top:181px;width:156.6px;height:460px;border:1px solid #828790;box-sizing:border-box;background:#fff"></div>
<svg style="left:467px;top:182.70px" width="13" height="13" viewBox="0 0 13 13"><g transform="rotate(42 6.5 6.5)"><path d="M3.6 2.2 L6.5 0.3 L9.4 2.2 V12 Q9.4 12.8 8.6 12.8 H4.4 Q3.6 12.8 3.6 12Z" fill="#f7c600" stroke="#d9a400" stroke-width="0.5"/><circle cx="6.5" cy="2.6" r="0.9" fill="#fff8d0"/></g></svg>
<div class="t" style="left:480.6px;top:183.45px;font-size:9.58px;line-height:11.49px;transform:scaleX(0.8772);transform-origin:left center;color:#1a1a1a">Tag</div>
<svg style="left:455.5px;top:186.20px" width="5" height="6" viewBox="0 0 5 6"><path d="M0.5 0.5 V5.5 L4 3Z" fill="#fff" stroke="#9a9a9a" stroke-width="0.8"/></svg>
<svg style="left:467px;top:194.55px" width="13" height="13" viewBox="0 0 13 13"><path d="M3.5 6 V4 Q3.5 1 6.5 1 Q9.5 1 9.5 4 V6" fill="none" stroke="#bcbcbc" stroke-width="1.3"/><rect x="1.8" y="6" width="9.4" height="6.5" rx="1" fill="#f0b020"/><rect x="1.8" y="6" width="9.4" height="2.5" fill="#ffd860"/><rect x="6" y="8.5" width="1" height="2" fill="#8a5a00"/></svg>
<div class="t" style="left:480.6px;top:195.30px;font-size:9.58px;line-height:11.49px;transform:scaleX(0.8772);transform-origin:left center;color:#1a1a1a">Security</div>
<svg style="left:455.5px;top:198.05px" width="6" height="6" viewBox="0 0 6 6"><path d="M5.5 0.5 V5.5 H0.5Z" fill="#333"/></svg>
<div class="t" style="left:478.5px;top:207.15px;font-size:9.58px;line-height:11.49px;transform:scaleX(0.8772);transform-origin:left center;color:#1a1a1a">Permission</div>
<svg style="left:470.2px;top:209.90px" width="5" height="6" viewBox="0 0 5 6"><path d="M0.5 0.5 V5.5 L4 3Z" fill="#fff" stroke="#9a9a9a" stroke-width="0.8"/></svg>
<div class="t" style="left:478.5px;top:219.00px;font-size:9.58px;line-height:11.49px;transform:scaleX(0.8772);transform-origin:left center;color:#1a1a1a">Policy</div>
<svg style="left:470.2px;top:221.75px" width="5" height="6" viewBox="0 0 5 6"><path d="M0.5 0.5 V5.5 L4 3Z" fill="#fff" stroke="#9a9a9a" stroke-width="0.8"/></svg>
<div class="t" style="left:478.5px;top:230.85px;font-size:9.58px;line-height:11.49px;transform:scaleX(0.8772);transform-origin:left center;color:#1a1a1a">RuntimeUser</div>
<svg style="left:470.2px;top:233.60px" width="5" height="6" viewBox="0 0 5 6"><path d="M0.5 0.5 V5.5 L4 3Z" fill="#fff" stroke="#9a9a9a" stroke-width="0.8"/></svg>
<div class="t" style="left:478.5px;top:242.70px;font-size:9.58px;line-height:11.49px;transform:scaleX(0.8772);transform-origin:left center;color:#1a1a1a">User</div>
<svg style="left:470.2px;top:245.45px" width="5" height="6" viewBox="0 0 5 6"><path d="M0.5 0.5 V5.5 L4 3Z" fill="#fff" stroke="#9a9a9a" stroke-width="0.8"/></svg>
<svg style="left:467px;top:253.80px" width="13" height="13" viewBox="0 0 13 13"><path d="M6.5 1 L12.5 12 H0.5Z" fill="#f4a500" stroke="#c06000" stroke-width="0.7"/><rect x="6" y="4.5" width="1" height="4.2" fill="#222"/><rect x="6" y="9.6" width="1" height="1.2" fill="#222"/></svg>
<div class="t" style="left:480.6px;top:254.55px;font-size:9.58px;line-height:11.49px;transform:scaleX(0.8772);transform-origin:left center;color:#1a1a1a">Alarm</div>
<svg style="left:455.5px;top:257.30px" width="6" height="6" viewBox="0 0 6 6"><path d="M5.5 0.5 V5.5 H0.5Z" fill="#333"/></svg>
<div class="t" style="left:478.5px;top:266.40px;font-size:9.58px;line-height:11.49px;transform:scaleX(0.8772);transform-origin:left center;color:#1a1a1a">Area</div>
<svg style="left:470.2px;top:269.15px" width="5" height="6" viewBox="0 0 5 6"><path d="M0.5 0.5 V5.5 L4 3Z" fill="#fff" stroke="#9a9a9a" stroke-width="0.8"/></svg>
<div class="t" style="left:478.5px;top:278.25px;font-size:9.58px;line-height:11.49px;transform:scaleX(0.8772);transform-origin:left center;color:#1a1a1a">AuditTrail</div>
<svg style="left:470.2px;top:281.00px" width="5" height="6" viewBox="0 0 5 6"><path d="M0.5 0.5 V5.5 L4 3Z" fill="#fff" stroke="#9a9a9a" stroke-width="0.8"/></svg>
<div class="t" style="left:478.5px;top:290.10px;font-size:9.58px;line-height:11.49px;transform:scaleX(0.8772);transform-origin:left center;color:#1a1a1a">Group</div>
<svg style="left:470.2px;top:292.85px" width="5" height="6" viewBox="0 0 5 6"><path d="M0.5 0.5 V5.5 L4 3Z" fill="#fff" stroke="#9a9a9a" stroke-width="0.8"/></svg>
<div class="t" style="left:478.5px;top:301.95px;font-size:9.58px;line-height:11.49px;transform:scaleX(0.8772);transform-origin:left center;color:#1a1a1a">Item</div>
<svg style="left:470.2px;top:304.70px" width="5" height="6" viewBox="0 0 5 6"><path d="M0.5 0.5 V5.5 L4 3Z" fill="#fff" stroke="#9a9a9a" stroke-width="0.8"/></svg>
<div class="t" style="left:478.5px;top:313.80px;font-size:9.58px;line-height:11.49px;transform:scaleX(0.8772);transform-origin:left center;color:#1a1a1a">PriorityItem</div>
<svg style="left:470.2px;top:316.55px" width="5" height="6" viewBox="0 0 5 6"><path d="M0.5 0.5 V5.5 L4 3Z" fill="#fff" stroke="#9a9a9a" stroke-width="0.8"/></svg>
<div class="t" style="left:478.5px;top:325.65px;font-size:9.58px;line-height:11.49px;transform:scaleX(0.8772);transform-origin:left center;color:#1a1a1a">QueryActive</div>
<svg style="left:470.2px;top:328.40px" width="5" height="6" viewBox="0 0 5 6"><path d="M0.5 0.5 V5.5 L4 3Z" fill="#fff" stroke="#9a9a9a" stroke-width="0.8"/></svg>
<div class="t" style="left:478.5px;top:337.50px;font-size:9.58px;line-height:11.49px;transform:scaleX(0.8772);transform-origin:left center;color:#1a1a1a">Redundancy</div>
<svg style="left:470.2px;top:340.25px" width="5" height="6" viewBox="0 0 5 6"><path d="M0.5 0.5 V5.5 L4 3Z" fill="#fff" stroke="#9a9a9a" stroke-width="0.8"/></svg>
<div class="t" style="left:478.5px;top:349.35px;font-size:9.58px;line-height:11.49px;transform:scaleX(0.8772);transform-origin:left center;color:#1a1a1a">StoreAndForward</div>
<svg style="left:470.2px;top:352.10px" width="5" height="6" viewBox="0 0 5 6"><path d="M0.5 0.5 V5.5 L4 3Z" fill="#fff" stroke="#9a9a9a" stroke-width="0.8"/></svg>
<svg style="left:467px;top:360.45px" width="13" height="13" viewBox="0 0 13 13"><ellipse cx="6.2" cy="11.6" rx="5.8" ry="1.3" fill="#d8d8d8"/><path d="M4 1.5 L9.5 0.5 V10.5 L4 11.5Z" fill="#3a3a3a"/><path d="M9.5 0.5 L11 1.3 V11 L9.5 10.5Z" fill="#9a9a9a"/><path d="M4.6 2.2 L9 1.4 V9.8 L4.6 10.6Z" fill="#6a6a6a"/><rect x="4.3" y="8.5" width="1" height="1.2" fill="#30c030"/><path d="M3 11 L8.5 10.5 L9 12.3 L3.5 12.6Z" fill="#f0d020"/></svg>
<div class="t" style="left:480.6px;top:361.20px;font-size:9.58px;line-height:11.49px;transform:scaleX(0.8772);transform-origin:left center;color:#1a1a1a">Device</div>
<svg style="left:455.5px;top:363.95px" width="6" height="6" viewBox="0 0 6 6"><path d="M5.5 0.5 V5.5 H0.5Z" fill="#333"/></svg>
<div class="t" style="left:478.5px;top:373.05px;font-size:9.58px;line-height:11.49px;transform:scaleX(0.8772);transform-origin:left center;color:#1a1a1a">AccessType</div>
<svg style="left:470.2px;top:375.80px" width="5" height="6" viewBox="0 0 5 6"><path d="M0.5 0.5 V5.5 L4 3Z" fill="#fff" stroke="#9a9a9a" stroke-width="0.8"/></svg>
<div class="t" style="left:478.5px;top:384.90px;font-size:9.58px;line-height:11.49px;transform:scaleX(0.8772);transform-origin:left center;color:#1a1a1a">Channel</div>
<div class="t" style="left:478.5px;top:396.75px;font-size:9.58px;line-height:11.49px;transform:scaleX(0.8772);transform-origin:left center;color:#1a1a1a">Node</div>
<svg style="left:470.2px;top:399.50px" width="5" height="6" viewBox="0 0 5 6"><path d="M0.5 0.5 V5.5 L4 3Z" fill="#fff" stroke="#9a9a9a" stroke-width="0.8"/></svg>
<svg style="left:467px;top:407.85px" width="13" height="13" viewBox="0 0 13 13"><g stroke="#5a6a78" stroke-width="0.5"><path d="M2 9.2 V11 Q6.5 13.2 11 11 V9.2" fill="#a8b4c0"/><ellipse cx="6.5" cy="9.2" rx="4.5" ry="1.6" fill="#dfe6ee"/><path d="M2 5.8 V7.6 Q6.5 9.8 11 7.6 V5.8" fill="#a8b4c0"/><ellipse cx="6.5" cy="5.8" rx="4.5" ry="1.6" fill="#dfe6ee"/><path d="M2 2.4 V4.2 Q6.5 6.4 11 4.2 V2.4" fill="#a8b4c0"/><ellipse cx="6.5" cy="2.4" rx="4.5" ry="1.6" fill="#eef2f6"/></g></svg>
<div class="t" style="left:480.6px;top:408.60px;font-size:9.58px;line-height:11.49px;transform:scaleX(0.8772);transform-origin:left center;color:#1a1a1a">Dataset</div>
<svg style="left:455.5px;top:411.35px" width="6" height="6" viewBox="0 0 6 6"><path d="M5.5 0.5 V5.5 H0.5Z" fill="#333"/></svg>
<div class="t" style="left:478.5px;top:420.45px;font-size:9.58px;line-height:11.49px;transform:scaleX(0.8772);transform-origin:left center;color:#1a1a1a">DB</div>
<svg style="left:470.2px;top:423.20px" width="5" height="6" viewBox="0 0 5 6"><path d="M0.5 0.5 V5.5 L4 3Z" fill="#fff" stroke="#9a9a9a" stroke-width="0.8"/></svg>
<div class="t" style="left:478.5px;top:432.30px;font-size:9.58px;line-height:11.49px;transform:scaleX(0.8772);transform-origin:left center;color:#1a1a1a">File</div>
<svg style="left:470.2px;top:435.05px" width="5" height="6" viewBox="0 0 5 6"><path d="M0.5 0.5 V5.5 L4 3Z" fill="#fff" stroke="#9a9a9a" stroke-width="0.8"/></svg>
<div class="t" style="left:478.5px;top:444.15px;font-size:9.58px;line-height:11.49px;transform:scaleX(0.8772);transform-origin:left center;color:#1a1a1a">Query</div>
<svg style="left:470.2px;top:446.90px" width="5" height="6" viewBox="0 0 5 6"><path d="M0.5 0.5 V5.5 L4 3Z" fill="#fff" stroke="#9a9a9a" stroke-width="0.8"/></svg>
<div class="t" style="left:478.5px;top:456.00px;font-size:9.58px;line-height:11.49px;transform:scaleX(0.8772);transform-origin:left center;color:#1a1a1a">Table</div>
<svg style="left:470.2px;top:458.75px" width="5" height="6" viewBox="0 0 5 6"><path d="M0.5 0.5 V5.5 L4 3Z" fill="#fff" stroke="#9a9a9a" stroke-width="0.8"/></svg>
<svg style="left:467px;top:467.10px" width="13" height="13" viewBox="0 0 13 13"><g><rect x="1" y="1" width="11.5" height="3.3" rx="0.8" fill="#c83040"/><rect x="0.5" y="4.3" width="12" height="3" rx="0.8" fill="#3050c0"/><rect x="1" y="7.3" width="11.5" height="3" rx="0.8" fill="#30a040"/><rect x="1.5" y="10.3" width="11" height="1.5" fill="#d0d0a0"/><rect x="5.8" y="1" width="1.5" height="10.8" fill="#c89060"/></g></svg>
<div class="t" style="left:480.6px;top:467.85px;font-size:9.58px;line-height:11.49px;transform:scaleX(0.8772);transform-origin:left center;color:#1a1a1a">Historian</div>
<svg style="left:455.5px;top:470.60px" width="6" height="6" viewBox="0 0 6 6"><path d="M5.5 0.5 V5.5 H0.5Z" fill="#333"/></svg>
<div class="t" style="left:478.5px;top:479.70px;font-size:9.58px;line-height:11.49px;transform:scaleX(0.8772);transform-origin:left center;color:#1a1a1a">Item</div>
<svg style="left:470.2px;top:482.45px" width="5" height="6" viewBox="0 0 5 6"><path d="M0.5 0.5 V5.5 L4 3Z" fill="#fff" stroke="#9a9a9a" stroke-width="0.8"/></svg>
<div class="t" style="left:478.5px;top:491.55px;font-size:9.58px;line-height:11.49px;transform:scaleX(0.8772);transform-origin:left center;color:#1a1a1a">Redundancy</div>
<svg style="left:470.2px;top:494.30px" width="5" height="6" viewBox="0 0 5 6"><path d="M0.5 0.5 V5.5 L4 3Z" fill="#fff" stroke="#9a9a9a" stroke-width="0.8"/></svg>
<div class="t" style="left:478.5px;top:503.40px;font-size:9.58px;line-height:11.49px;transform:scaleX(0.8772);transform-origin:left center;color:#1a1a1a">StoreAndForward</div>
<svg style="left:470.2px;top:506.15px" width="5" height="6" viewBox="0 0 5 6"><path d="M0.5 0.5 V5.5 L4 3Z" fill="#fff" stroke="#9a9a9a" stroke-width="0.8"/></svg>
<div class="t" style="left:478.5px;top:515.25px;font-size:9.58px;line-height:11.49px;transform:scaleX(0.8772);transform-origin:left center;color:#1a1a1a">Table</div>
<svg style="left:470.2px;top:518.00px" width="5" height="6" viewBox="0 0 5 6"><path d="M0.5 0.5 V5.5 L4 3Z" fill="#fff" stroke="#9a9a9a" stroke-width="0.8"/></svg>
<svg style="left:467px;top:526.35px" width="13" height="13" viewBox="0 0 13 13"><rect x="2" y="1" width="9" height="11.5" fill="#f0f4f8" stroke="#a0b0c0" stroke-width="0.6"/><rect x="3" y="2" width="7" height="2" fill="#b0c8e0"/><g fill="#7090b0"><rect x="3" y="5" width="1.5" height="1.3"/><rect x="5.7" y="5" width="1.5" height="1.3"/><rect x="8.4" y="5" width="1.5" height="1.3"/><rect x="3" y="7.3" width="1.5" height="1.3"/><rect x="5.7" y="7.3" width="1.5" height="1.3"/><rect x="8.4" y="7.3" width="1.5" height="1.3"/><rect x="3" y="9.6" width="1.5" height="1.3"/><rect x="5.7" y="9.6" width="1.5" height="1.3"/><rect x="8.4" y="9.6" width="1.5" height="1.3"/></g></svg>
<div class="t" style="left:480.6px;top:527.10px;font-size:9.58px;line-height:11.49px;transform:scaleX(0.8772);transform-origin:left center;color:#1a1a1a">Script</div>
<svg style="left:455.5px;top:529.85px" width="6" height="6" viewBox="0 0 6 6"><path d="M5.5 0.5 V5.5 H0.5Z" fill="#333"/></svg>
<div class="t" style="left:478.5px;top:538.95px;font-size:9.58px;line-height:11.49px;transform:scaleX(0.8772);transform-origin:left center;color:#1a1a1a">Class</div>
<svg style="left:470.2px;top:541.70px" width="5" height="6" viewBox="0 0 5 6"><path d="M0.5 0.5 V5.5 L4 3Z" fill="#fff" stroke="#9a9a9a" stroke-width="0.8"/></svg>
<div class="t" style="left:478.5px;top:550.80px;font-size:9.58px;line-height:11.49px;transform:scaleX(0.8772);transform-origin:left center;color:#1a1a1a">Task</div>
<svg style="left:470.2px;top:553.55px" width="5" height="6" viewBox="0 0 5 6"><path d="M0.5 0.5 V5.5 L4 3Z" fill="#fff" stroke="#9a9a9a" stroke-width="0.8"/></svg>
<svg style="left:467px;top:561.90px" width="13" height="13" viewBox="0 0 13 13"><path d="M0.5 11 L4 12.8 L12.5 11 L9 9.5Z" fill="#c8ccd4"/><rect x="2" y="1" width="3" height="10.5" fill="#7088a8"/><rect x="2" y="1" width="1" height="10.5" fill="#98b0cc"/><rect x="5.2" y="4.5" width="3" height="7.5" fill="#d83018"/><rect x="8.4" y="3" width="3" height="8.5" fill="#f0a010"/><rect x="8.4" y="3" width="1" height="8.5" fill="#f8c850"/></svg>
<div class="t" style="left:480.6px;top:562.65px;font-size:9.58px;line-height:11.49px;transform:scaleX(0.8772);transform-origin:left center;color:#1a1a1a">Report</div>
<svg style="left:455.5px;top:565.40px" width="6" height="6" viewBox="0 0 6 6"><path d="M5.5 0.5 V5.5 H0.5Z" fill="#333"/></svg>
<div class="t" style="left:478.5px;top:574.50px;font-size:9.58px;line-height:11.49px;transform:scaleX(0.8772);transform-origin:left center;color:#1a1a1a">Asset1_Log</div>
<svg style="left:470.2px;top:577.25px" width="5" height="6" viewBox="0 0 5 6"><path d="M0.5 0.5 V5.5 L4 3Z" fill="#fff" stroke="#9a9a9a" stroke-width="0.8"/></svg>
<div style="left:465px;top:586.0999999999999px;width:41px;height:12px;background:#e6e6e6"></div>
<svg style="left:467px;top:585.60px" width="13" height="13" viewBox="0 0 13 13"><path d="M3 2 L8 0.8 L10 1.8 V12 L5 12.8 L3 12Z" fill="#f2d890" stroke="#c8a858" stroke-width="0.5"/><path d="M4.5 2.5 L8 1.8 V11.5 L4.5 12Z" fill="#fffaf0"/></svg>
<div class="t" style="left:480.6px;top:586.35px;font-size:9.58px;line-height:11.49px;transform:scaleX(0.8772);transform-origin:left center;color:#1a1a1a">Server</div>
<svg style="left:455.5px;top:589.10px" width="6" height="6" viewBox="0 0 6 6"><path d="M5.5 0.5 V5.5 H0.5Z" fill="#333"/></svg>
<div class="t" style="left:478.5px;top:598.20px;font-size:9.58px;line-height:11.49px;transform:scaleX(0.8772);transform-origin:left center;color:#1a1a1a">Retentive</div>
<svg style="left:467px;top:609.30px" width="13" height="13" viewBox="0 0 13 13"><circle cx="6.5" cy="6.5" r="6" fill="#1a6ad0"/><circle cx="6.5" cy="5" r="5" fill="#4a9af0" opacity="0.6"/><rect x="5.7" y="5.5" width="1.7" height="5" fill="#fff"/><circle cx="6.5" cy="3.5" r="1" fill="#fff"/></svg>
<div class="t" style="left:480.6px;top:610.05px;font-size:9.58px;line-height:11.49px;transform:scaleX(0.8772);transform-origin:left center;color:#1a1a1a">Info</div>
<svg style="left:455.5px;top:612.80px" width="6" height="6" viewBox="0 0 6 6"><path d="M5.5 0.5 V5.5 H0.5Z" fill="#333"/></svg>
<div class="t" style="left:478.5px;top:621.90px;font-size:9.58px;line-height:11.49px;transform:scaleX(0.8772);transform-origin:left center;color:#1a1a1a">CategoryItem</div>
<svg style="left:470.2px;top:624.65px" width="5" height="6" viewBox="0 0 5 6"><path d="M0.5 0.5 V5.5 L4 3Z" fill="#fff" stroke="#9a9a9a" stroke-width="0.8"/></svg>
<div class="t" style="left:478.5px;top:633.75px;font-size:9.58px;line-height:11.49px;transform:scaleX(0.8772);transform-origin:left center;color:#1a1a1a">Messages</div>
<svg style="left:470.2px;top:636.50px" width="5" height="6" viewBox="0 0 5 6"><path d="M0.5 0.5 V5.5 L4 3Z" fill="#fff" stroke="#9a9a9a" stroke-width="0.8"/></svg>
<div style="left:614.5px;top:139px;width:5px;height:497.5px;background:#f0f0f0"></div>
<div class="t" style="left:633px;top:162.43px;font-size:9.61px;line-height:11.53px;transform:scaleX(0.8772);transform-origin:left center;color:#1a1a1a">Selected Object: Server</div>
<div style="left:627px;top:198px;width:294.5px;height:438.5px;border-top:1px solid #d9d9d9;border-left:1px solid #d9d9d9;box-sizing:border-box"></div>
<div style="left:704px;top:183px;width:66.5px;height:15.5px;background:#f0f0f0;border:1px solid #cfcfcf;box-sizing:border-box"></div>
<div class="t" style="left:707.5px;top:185.55px;font-size:9.58px;line-height:11.49px;transform:scaleX(0.8772);transform-origin:left center;color:#1a1a1a">Modules Status</div>
<div style="left:627px;top:181.5px;width:77.5px;height:17.5px;background:#fff;border:1px solid #d9d9d9;border-bottom:none;box-sizing:border-box"></div>
<div class="t" style="left:632.5px;top:184.55px;font-size:9.58px;line-height:11.49px;transform:scaleX(0.8772);transform-origin:left center;color:#1a1a1a">Object Properties</div>
<div style="left:629px;top:199px;width:291.5px;height:437.5px;background:#fff;border:1px solid #9a9ad0;border-bottom:none;box-sizing:border-box"></div>
<div style="left:776px;top:200px;width:127px;height:19px;background:linear-gradient(#ffffff 0,#ffffff 45%,#eeeeee 50%,#e8e8e8)"></div>
<div style="left:630px;top:200px;width:14px;height:18.5px;background:linear-gradient(90deg,#ffffff,#e8e8e8)"></div>
<div style="left:646px;top:200px;width:129.7px;height:19px;background:linear-gradient(#eef6fb 0,#eaf3fa 47%,#dcebf6 50%,#d8e8f4);border:1px solid #b4def6;box-sizing:border-box"></div>
<div style="left:775.5px;top:200px;width:1px;height:19px;background:#d0d8e0"></div>
<div class="t" style="left:649px;top:205.25px;font-size:9.58px;line-height:11.49px;transform:scaleX(0.8772);transform-origin:left center;color:#1a1a1a">Property</div>
<div class="t" style="left:779px;top:205.25px;font-size:9.58px;line-height:11.49px;transform:scaleX(0.8772);transform-origin:left center;color:#1a1a1a">Value</div>
<div style="left:646px;top:218.6px;width:257px;height:15.55px;background:#ffffff"></div>
<div style="left:646px;top:233.75px;width:257px;height:1px;background:#e6eff8"></div>
<div style="left:630px;top:219.2px;width:14px;height:15.55px;background:linear-gradient(90deg,#fafafa,#ececec);border-bottom:1px solid #d8d8d8;border-right:1px solid #d0d0d0;box-sizing:border-box"></div>
<div class="t" style="left:648.2px;top:222.21px;font-size:9.44px;line-height:11.33px;transform:scaleX(0.8772);transform-origin:left center;color:#1a1a1a">Now</div>
<div class="t" style="left:778.5px;top:222.21px;font-size:9.44px;line-height:11.33px;transform:scaleX(0.8772);transform-origin:left center;color:#1a1a1a">10/18/2020 1:02:14.026 AM</div>
<div style="left:646px;top:234.15px;width:257px;height:15.55px;background:#f0f0f0"></div>
<div style="left:646px;top:249.3px;width:257px;height:1px;background:#e6eff8"></div>
<div style="left:630px;top:234.75px;width:14px;height:15.55px;background:linear-gradient(90deg,#fafafa,#ececec);border-bottom:1px solid #d8d8d8;border-right:1px solid #d0d0d0;box-sizing:border-box"></div>
<div class="t" style="left:648.2px;top:237.76px;font-size:9.44px;line-height:11.33px;transform:scaleX(0.8772);transform-origin:left center;color:#1a1a1a">Date</div>
<div class="t" style="left:778.5px;top:237.76px;font-size:9.44px;line-height:11.33px;transform:scaleX(0.8772);transform-origin:left center;color:#1a1a1a">10/18/2020 12:00:00.000 AM</div>
<div style="left:646px;top:249.7px;width:257px;height:15.55px;background:#ffffff"></div>
<div style="left:646px;top:264.85px;width:257px;height:1px;background:#e6eff8"></div>
<div style="left:630px;top:250.29999999999998px;width:14px;height:15.55px;background:linear-gradient(90deg,#fafafa,#ececec);border-bottom:1px solid #d8d8d8;border-right:1px solid #d0d0d0;box-sizing:border-box"></div>
<div class="t" style="left:648.2px;top:253.31px;font-size:9.44px;line-height:11.33px;transform:scaleX(0.8772);transform-origin:left center;color:#1a1a1a">DayOfWeek</div>
<div class="t" style="left:778.5px;top:253.31px;font-size:9.44px;line-height:11.33px;transform:scaleX(0.8772);transform-origin:left center;color:#1a1a1a">Sunday</div>
<div style="left:646px;top:265.25px;width:257px;height:15.55px;background:#f0f0f0"></div>
<div style="left:646px;top:280.40000000000003px;width:257px;height:1px;background:#e6eff8"></div>
<div style="left:630px;top:265.85px;width:14px;height:15.55px;background:linear-gradient(90deg,#fafafa,#ececec);border-bottom:1px solid #d8d8d8;border-right:1px solid #d0d0d0;box-sizing:border-box"></div>
<div class="t" style="left:648.2px;top:268.86px;font-size:9.44px;line-height:11.33px;transform:scaleX(0.8772);transform-origin:left center;color:#1a1a1a">DayOfYear</div>
<div class="t" style="left:778.5px;top:268.86px;font-size:9.44px;line-height:11.33px;transform:scaleX(0.8772);transform-origin:left center;color:#1a1a1a">292</div>
<div style="left:646px;top:280.8px;width:257px;height:15.55px;background:#ffffff"></div>
<div style="left:646px;top:295.95000000000005px;width:257px;height:1px;background:#e6eff8"></div>
<div style="left:630px;top:281.40000000000003px;width:14px;height:15.55px;background:linear-gradient(90deg,#fafafa,#ececec);border-bottom:1px solid #d8d8d8;border-right:1px solid #d0d0d0;box-sizing:border-box"></div>
<div class="t" style="left:648.2px;top:284.41px;font-size:9.44px;line-height:11.33px;transform:scaleX(0.8772);transform-origin:left center;color:#1a1a1a">Ticks</div>
<div class="t" style="left:778.5px;top:284.41px;font-size:9.44px;line-height:11.33px;transform:scaleX(0.8772);transform-origin:left center;color:#1a1a1a">637385797342475350</div>
<div style="left:646px;top:296.35px;width:257px;height:15.55px;background:#f0f0f0"></div>
<div style="left:646px;top:311.50000000000006px;width:257px;height:1px;background:#e6eff8"></div>
<div style="left:630px;top:296.95000000000005px;width:14px;height:15.55px;background:linear-gradient(90deg,#fafafa,#ececec);border-bottom:1px solid #d8d8d8;border-right:1px solid #d0d0d0;box-sizing:border-box"></div>
<div class="t" style="left:648.2px;top:299.96px;font-size:9.44px;line-height:11.33px;transform:scaleX(0.8772);transform-origin:left center;color:#1a1a1a">Time</div>
<div class="t" style="left:778.5px;top:299.96px;font-size:9.44px;line-height:11.33px;transform:scaleX(0.8772);transform-origin:left center;color:#1a1a1a">01:02:14</div>
<div style="left:646px;top:311.9px;width:257px;height:15.55px;background:#ffffff"></div>
<div style="left:646px;top:327.05px;width:257px;height:1px;background:#e6eff8"></div>
<div style="left:630px;top:312.5px;width:14px;height:15.55px;background:linear-gradient(90deg,#fafafa,#ececec);border-bottom:1px solid #d8d8d8;border-right:1px solid #d0d0d0;box-sizing:border-box"></div>
<div class="t" style="left:648.2px;top:315.51px;font-size:9.44px;line-height:11.33px;transform:scaleX(0.8772);transform-origin:left center;color:#1a1a1a">Second</div>
<div class="t" style="left:778.5px;top:315.51px;font-size:9.44px;line-height:11.33px;transform:scaleX(0.8772);transform-origin:left center;color:#1a1a1a">14</div>
<div style="left:646px;top:327.45px;width:257px;height:15.55px;background:#f0f0f0"></div>
<div style="left:646px;top:342.6px;width:257px;height:1px;background:#e6eff8"></div>
<div style="left:630px;top:328.05px;width:14px;height:15.55px;background:linear-gradient(90deg,#fafafa,#ececec);border-bottom:1px solid #d8d8d8;border-right:1px solid #d0d0d0;box-sizing:border-box"></div>
<div class="t" style="left:648.2px;top:331.06px;font-size:9.44px;line-height:11.33px;transform:scaleX(0.8772);transform-origin:left center;color:#1a1a1a">Minute</div>
<div class="t" style="left:778.5px;top:331.06px;font-size:9.44px;line-height:11.33px;transform:scaleX(0.8772);transform-origin:left center;color:#1a1a1a">2</div>
<div style="left:646px;top:343.0px;width:257px;height:15.55px;background:#ffffff"></div>
<div style="left:646px;top:358.15000000000003px;width:257px;height:1px;background:#e6eff8"></div>
<div style="left:630px;top:343.6px;width:14px;height:15.55px;background:linear-gradient(90deg,#fafafa,#ececec);border-bottom:1px solid #d8d8d8;border-right:1px solid #d0d0d0;box-sizing:border-box"></div>
<div class="t" style="left:648.2px;top:346.61px;font-size:9.44px;line-height:11.33px;transform:scaleX(0.8772);transform-origin:left center;color:#1a1a1a">Hour</div>
<div class="t" style="left:778.5px;top:346.61px;font-size:9.44px;line-height:11.33px;transform:scaleX(0.8772);transform-origin:left center;color:#1a1a1a">1</div>
<div style="left:646px;top:358.55px;width:257px;height:15.55px;background:#f0f0f0"></div>
<div style="left:646px;top:373.70000000000005px;width:257px;height:1px;background:#e6eff8"></div>
<div style="left:630px;top:359.15000000000003px;width:14px;height:15.55px;background:linear-gradient(90deg,#fafafa,#ececec);border-bottom:1px solid #d8d8d8;border-right:1px solid #d0d0d0;box-sizing:border-box"></div>
<div class="t" style="left:648.2px;top:362.16px;font-size:9.44px;line-height:11.33px;transform:scaleX(0.8772);transform-origin:left center;color:#1a1a1a">Day</div>
<div class="t" style="left:778.5px;top:362.16px;font-size:9.44px;line-height:11.33px;transform:scaleX(0.8772);transform-origin:left center;color:#1a1a1a">18</div>
<div style="left:646px;top:374.1px;width:257px;height:15.55px;background:#ffffff"></div>
<div style="left:646px;top:389.25000000000006px;width:257px;height:1px;background:#e6eff8"></div>
<div style="left:630px;top:374.70000000000005px;width:14px;height:15.55px;background:linear-gradient(90deg,#fafafa,#ececec);border-bottom:1px solid #d8d8d8;border-right:1px solid #d0d0d0;box-sizing:border-box"></div>
<div class="t" style="left:648.2px;top:377.71px;font-size:9.44px;line-height:11.33px;transform:scaleX(0.8772);transform-origin:left center;color:#1a1a1a">Month</div>
<div class="t" style="left:778.5px;top:377.71px;font-size:9.44px;line-height:11.33px;transform:scaleX(0.8772);transform-origin:left center;color:#1a1a1a">10</div>
<div style="left:646px;top:389.65px;width:257px;height:15.55px;background:#f0f0f0"></div>
<div style="left:646px;top:404.8px;width:257px;height:1px;background:#e6eff8"></div>
<div style="left:630px;top:390.25px;width:14px;height:15.55px;background:linear-gradient(90deg,#fafafa,#ececec);border-bottom:1px solid #d8d8d8;border-right:1px solid #d0d0d0;box-sizing:border-box"></div>
<div class="t" style="left:648.2px;top:393.26px;font-size:9.44px;line-height:11.33px;transform:scaleX(0.8772);transform-origin:left center;color:#1a1a1a">Year</div>
<div class="t" style="left:778.5px;top:393.26px;font-size:9.44px;line-height:11.33px;transform:scaleX(0.8772);transform-origin:left center;color:#1a1a1a">2020</div>
<div style="left:646px;top:405.20000000000005px;width:257px;height:15.55px;background:#ffffff"></div>
<div style="left:646px;top:420.3500000000001px;width:257px;height:1px;background:#e6eff8"></div>
<div style="left:630px;top:405.80000000000007px;width:14px;height:15.55px;background:linear-gradient(90deg,#fafafa,#ececec);border-bottom:1px solid #d8d8d8;border-right:1px solid #d0d0d0;box-sizing:border-box"></div>
<div class="t" style="left:648.2px;top:408.81px;font-size:9.44px;line-height:11.33px;transform:scaleX(0.8772);transform-origin:left center;color:#1a1a1a">Shutdown</div>
<div class="t" style="left:778.5px;top:408.81px;font-size:9.44px;line-height:11.33px;transform:scaleX(0.8772);transform-origin:left center;color:#1a1a1a">False</div>
<div style="left:646px;top:420.75px;width:257px;height:15.55px;background:#f0f0f0"></div>
<div style="left:646px;top:435.90000000000003px;width:257px;height:1px;background:#e6eff8"></div>
<div style="left:630px;top:421.35px;width:14px;height:15.55px;background:linear-gradient(90deg,#fafafa,#ececec);border-bottom:1px solid #d8d8d8;border-right:1px solid #d0d0d0;box-sizing:border-box"></div>
<div class="t" style="left:648.2px;top:424.36px;font-size:9.44px;line-height:11.33px;transform:scaleX(0.8772);transform-origin:left center;color:#1a1a1a">Startup</div>
<div class="t" style="left:778.5px;top:424.36px;font-size:9.44px;line-height:11.33px;transform:scaleX(0.8772);transform-origin:left center;color:#1a1a1a">True</div>
<div style="left:646px;top:436.3px;width:257px;height:15.55px;background:#ffffff"></div>
<div style="left:646px;top:451.45000000000005px;width:257px;height:1px;background:#e6eff8"></div>
<div style="left:630px;top:436.90000000000003px;width:14px;height:15.55px;background:linear-gradient(90deg,#fafafa,#ececec);border-bottom:1px solid #d8d8d8;border-right:1px solid #d0d0d0;box-sizing:border-box"></div>
<div class="t" style="left:648.2px;top:439.91px;font-size:9.44px;line-height:11.33px;transform:scaleX(0.8772);transform-origin:left center;color:#1a1a1a">ComputerIP</div>
<div style="left:646px;top:451.85px;width:257px;height:15.55px;background:#f0f0f0"></div>
<div style="left:646px;top:467.00000000000006px;width:257px;height:1px;background:#e6eff8"></div>
<div style="left:630px;top:452.45000000000005px;width:14px;height:15.55px;background:linear-gradient(90deg,#fafafa,#ececec);border-bottom:1px solid #d8d8d8;border-right:1px solid #d0d0d0;box-sizing:border-box"></div>
<div class="t" style="left:648.2px;top:455.46px;font-size:9.44px;line-height:11.33px;transform:scaleX(0.8772);transform-origin:left center;color:#1a1a1a">ComputerName</div>
<div style="left:646px;top:467.4px;width:257px;height:15.55px;background:#ffffff"></div>
<div style="left:646px;top:482.55px;width:257px;height:1px;background:#e6eff8"></div>
<div style="left:630px;top:468.0px;width:14px;height:15.55px;background:linear-gradient(90deg,#fafafa,#ececec);border-bottom:1px solid #d8d8d8;border-right:1px solid #d0d0d0;box-sizing:border-box"></div>
<div class="t" style="left:648.2px;top:471.01px;font-size:9.44px;line-height:11.33px;transform:scaleX(0.8772);transform-origin:left center;color:#1a1a1a">IsPrimary</div>
<div style="left:646px;top:482.95000000000005px;width:257px;height:15.55px;background:#f0f0f0"></div>
<div style="left:646px;top:498.1000000000001px;width:257px;height:1px;background:#e6eff8"></div>
<div style="left:630px;top:483.55000000000007px;width:14px;height:15.55px;background:linear-gradient(90deg,#fafafa,#ececec);border-bottom:1px solid #d8d8d8;border-right:1px solid #d0d0d0;box-sizing:border-box"></div>
<div class="t" style="left:648.2px;top:486.56px;font-size:9.44px;line-height:11.33px;transform:scaleX(0.8772);transform-origin:left center;color:#1a1a1a">IsSecondary</div>
<div style="left:646px;top:498.5px;width:257px;height:15.55px;background:#ffffff"></div>
<div style="left:646px;top:513.65px;width:257px;height:1px;background:#e6eff8"></div>
<div style="left:630px;top:499.1px;width:14px;height:15.55px;background:linear-gradient(90deg,#fafafa,#ececec);border-bottom:1px solid #d8d8d8;border-right:1px solid #d0d0d0;box-sizing:border-box"></div>
<div class="t" style="left:648.2px;top:502.11px;font-size:9.44px;line-height:11.33px;transform:scaleX(0.8772);transform-origin:left center;color:#1a1a1a">IsRedundancyEnabled</div>
<div style="left:646px;top:514.05px;width:257px;height:15.55px;background:#f0f0f0"></div>
<div style="left:646px;top:529.1999999999999px;width:257px;height:1px;background:#e6eff8"></div>
<div style="left:630px;top:514.65px;width:14px;height:15.55px;background:linear-gradient(90deg,#fafafa,#ececec);border-bottom:1px solid #d8d8d8;border-right:1px solid #d0d0d0;box-sizing:border-box"></div>
<div class="t" style="left:648.2px;top:517.66px;font-size:9.44px;line-height:11.33px;transform:scaleX(0.8772);transform-origin:left center;color:#1a1a1a">IsSwitchToPrimaryEnabled</div>
<div style="left:646px;top:529.6px;width:257px;height:15.55px;background:#ffffff"></div>
<div style="left:646px;top:544.75px;width:257px;height:1px;background:#e6eff8"></div>
<div style="left:630px;top:530.2px;width:14px;height:15.55px;background:linear-gradient(90deg,#fafafa,#ececec);border-bottom:1px solid #d8d8d8;border-right:1px solid #d0d0d0;box-sizing:border-box"></div>
<div class="t" style="left:648.2px;top:533.21px;font-size:9.44px;line-height:11.33px;transform:scaleX(0.8772);transform-origin:left center;color:#1a1a1a">TimeMs</div>
<div style="left:646px;top:545.15px;width:257px;height:15.55px;background:#f0f0f0"></div>
<div style="left:646px;top:560.3px;width:257px;height:1px;background:#e6eff8"></div>
<div style="left:630px;top:545.75px;width:14px;height:15.55px;background:linear-gradient(90deg,#fafafa,#ececec);border-bottom:1px solid #d8d8d8;border-right:1px solid #d0d0d0;box-sizing:border-box"></div>
<div class="t" style="left:648.2px;top:548.76px;font-size:9.44px;line-height:11.33px;transform:scaleX(0.8772);transform-origin:left center;color:#1a1a1a">HttpAddress</div>
<div style="left:646px;top:560.7px;width:257px;height:15.55px;background:#ffffff"></div>
<div style="left:646px;top:575.85px;width:257px;height:1px;background:#e6eff8"></div>
<div style="left:630px;top:561.3000000000001px;width:14px;height:15.55px;background:linear-gradient(90deg,#fafafa,#ececec);border-bottom:1px solid #d8d8d8;border-right:1px solid #d0d0d0;box-sizing:border-box"></div>
<div class="t" style="left:648.2px;top:564.31px;font-size:9.44px;line-height:11.33px;transform:scaleX(0.8772);transform-origin:left center;color:#1a1a1a">IsStandByActive</div>
<div style="left:646px;top:576.25px;width:257px;height:15.55px;background:#f0f0f0"></div>
<div style="left:646px;top:591.4px;width:257px;height:1px;background:#e6eff8"></div>
<div style="left:630px;top:576.85px;width:14px;height:15.55px;background:linear-gradient(90deg,#fafafa,#ececec);border-bottom:1px solid #d8d8d8;border-right:1px solid #d0d0d0;box-sizing:border-box"></div>
<div class="t" style="left:648.2px;top:579.86px;font-size:9.44px;line-height:11.33px;transform:scaleX(0.8772);transform-origin:left center;color:#1a1a1a">Yesterday</div>
<div style="left:646px;top:591.8000000000001px;width:257px;height:15.55px;background:#ffffff"></div>
<div style="left:646px;top:606.95px;width:257px;height:1px;background:#e6eff8"></div>
<div style="left:630px;top:592.4000000000001px;width:14px;height:15.55px;background:linear-gradient(90deg,#fafafa,#ececec);border-bottom:1px solid #d8d8d8;border-right:1px solid #d0d0d0;box-sizing:border-box"></div>
<div class="t" style="left:648.2px;top:595.41px;font-size:9.44px;line-height:11.33px;transform:scaleX(0.8772);transform-origin:left center;color:#1a1a1a">Tomorrow</div>
<div style="left:646px;top:607.35px;width:257px;height:15.55px;background:#f0f0f0"></div>
<div style="left:646px;top:622.5px;width:257px;height:1px;background:#e6eff8"></div>
<div style="left:630px;top:607.95px;width:14px;height:15.55px;background:linear-gradient(90deg,#fafafa,#ececec);border-bottom:1px solid #d8d8d8;border-right:1px solid #d0d0d0;box-sizing:border-box"></div>
<div class="t" style="left:648.2px;top:610.96px;font-size:9.44px;line-height:11.33px;transform:scaleX(0.8772);transform-origin:left center;color:#1a1a1a">TimeSpan</div>
<div style="left:646px;top:622.9px;width:257px;height:15.55px;background:#ffffff"></div>
<div style="left:646px;top:638.05px;width:257px;height:1px;background:#e6eff8"></div>
<div style="left:630px;top:623.5px;width:14px;height:15.55px;background:linear-gradient(90deg,#fafafa,#ececec);border-bottom:1px solid #d8d8d8;border-right:1px solid #d0d0d0;box-sizing:border-box"></div>
<div class="t" style="left:648.2px;top:626.51px;font-size:9.44px;line-height:11.33px;transform:scaleX(0.8772);transform-origin:left center;color:#1a1a1a">PrimaryIP</div>
<div style="left:775.5px;top:219.4px;width:1px;height:420px;background:#dce8f4"></div>
<div style="left:646px;top:218.6px;width:129.5px;height:15.8px;border:1px solid #a4dcf8;box-sizing:border-box"></div>
<div style="left:776px;top:218.6px;width:127px;height:15.8px;background:linear-gradient(#f0f8fe,#ddeefb);border:1px solid #a4dcf8;box-sizing:border-box"></div>
<div class="t" style="left:779px;top:222.54px;font-size:9.44px;line-height:11.33px;transform:scaleX(0.8772);transform-origin:left center;color:#1a1a1a">10/18/2020 1:02:14.026 AM</div>
<svg style="left:634.8px;top:223.6px" width="5" height="6.5" viewBox="0 0 5 6.5"><path d="M0.3 0.2 V6.3 L4.3 3.25Z" fill="#111"/></svg>
<div style="left:907px;top:200px;width:14px;height:440px;background:#f4f4f4;border-left:1px solid #e4e4e4;box-sizing:border-box"></div>
<svg style="left:910px;top:205px" width="6" height="4" viewBox="0 0 6 4"><path d="M0 4 L3 0.5 L6 4Z" fill="#606060"/></svg>
<div style="left:907.5px;top:214px;width:11.3px;height:306px;background:linear-gradient(90deg,#ececec,#d4d4d4 60%,#c4c4c4);border:1px solid #bcbcbc;border-radius:1px;box-sizing:border-box"></div>
<div style="left:918.8px;top:200px;width:2.7px;height:440px;background:#fafafa"></div>
<div style="left:910.5px;top:364.5px;width:5px;height:0.9px;background:#7a7a7a"></div>
<div style="left:910.5px;top:366.5px;width:5px;height:0.9px;background:#7a7a7a"></div>
<div style="left:910.5px;top:368.5px;width:5px;height:0.9px;background:#7a7a7a"></div>
</div>
<div style="left:751px;top:436px;width:273px;height:214px;background:#4672c6"></div>
<div style="left:755px;top:440px;width:265px;height:205px;background:#fff"></div>
<div style="left:757px;top:457px;width:263px;height:188px;border:1px solid #d9d9d9;border-right:none;border-bottom:none;box-sizing:border-box"></div>
<div style="left:758.5px;top:443.2px;width:70px;height:14.3px;background:#f0f0f0;border:1px solid #c8c8c8;box-sizing:border-box"></div>
<div class="t" style="left:762.5px;top:445.39px;font-size:9.35px;line-height:11.22px;transform:scaleX(0.8772);transform-origin:left center;color:#1a1a1a">Object Properties</div>
<div style="left:828px;top:441.5px;width:65.5px;height:16.5px;background:#fff;border:1px solid #d0d0d0;border-bottom:none;box-sizing:border-box"></div>
<div class="t" style="left:832.5px;top:444.39px;font-size:9.69px;line-height:11.63px;transform:scaleX(0.8772);transform-origin:left center;color:#1a1a1a">Modules Status</div>
<div class="t" style="left:780.5px;top:464.67px;font-size:11.06px;line-height:13.27px;transform:scaleX(0.8772);transform-origin:left center;color:#111;font-weight:bold">Module</div>
<div class="t" style="left:848.6px;top:464.80px;font-size:10.83px;line-height:13.00px;transform:scaleX(0.8772);transform-origin:left center;color:#111;font-weight:bold">State</div>
<div class="t" style="left:938px;top:465.01px;font-size:10.49px;line-height:12.59px;transform:scaleX(0.8772);transform-origin:left center;color:#111;font-weight:bold">Commands</div>
<svg style="left:775px;top:486px" width="15" height="14" viewBox="0 0 13 13"><path d="M6.5 1 L12.5 12 H0.5Z" fill="#f4a500" stroke="#c06000" stroke-width="0.7"/><rect x="6" y="4.5" width="1" height="4.2" fill="#222"/><rect x="6" y="9.6" width="1" height="1.2" fill="#222"/></svg>
<div class="t" style="left:607.5px;width:400px;text-align:center;top:488.49px;font-size:9.35px;line-height:11.22px;transform:scaleX(0.8772);transform-origin:center center;color:#1a1a1a">Alarms</div>
<div class="t" style="left:848.6px;top:487.42px;font-size:9.80px;line-height:11.76px;transform:scaleX(0.8772);transform-origin:left center;color:#1a1a1a">running</div>
<div style="left:913.7px;top:484.0px;width:28.7px;height:16.7px;box-sizing:border-box;background:#fafafa;border:1px solid #ececec"></div>
<div style="left:921.7px;top:486.0px"><svg width="13" height="13" viewBox="0 0 13 13"><circle cx="6.5" cy="6.5" r="6.3" fill="#c4c8e8"/><path d="M5 3.5 L10 6.5 L5 9.5Z" fill="#fff"/></svg></div>
<div style="left:948.6px;top:484.0px;width:28.7px;height:16.7px;box-sizing:border-box;background:#dadada;border:1px solid #7a7a7a"></div>
<div style="left:956.6px;top:486.0px"><svg width="13" height="13" viewBox="0 0 13 13"><defs><radialGradient id="cg" cx="0.5" cy="0.85" r="0.75"><stop offset="0" stop-color="#60a8ff"/><stop offset="0.45" stop-color="#1030c0"/><stop offset="1" stop-color="#000a60"/></radialGradient></defs><circle cx="6.5" cy="6.5" r="6.3" fill="url(#cg)"/><rect x="4.3" y="3.8" width="1.6" height="5.4" fill="#fff"/><rect x="7.1" y="3.8" width="1.6" height="5.4" fill="#fff"/></svg></div>
<div style="left:983.8px;top:484.0px;width:28.7px;height:16.7px;box-sizing:border-box;background:#dadada;border:1px solid #7a7a7a"></div>
<div style="left:991.8px;top:486.0px"><svg width="13" height="13" viewBox="0 0 13 13"><defs><radialGradient id="cg" cx="0.5" cy="0.85" r="0.75"><stop offset="0" stop-color="#60a8ff"/><stop offset="0.45" stop-color="#1030c0"/><stop offset="1" stop-color="#000a60"/></radialGradient></defs><circle cx="6.5" cy="6.5" r="6.3" fill="url(#cg)"/><rect x="4" y="4" width="5" height="5" fill="#fff"/></svg></div>
<svg style="left:771px;top:508px" width="15" height="14" viewBox="0 0 13 13"><g><rect x="1" y="1" width="11.5" height="3.3" rx="0.8" fill="#c83040"/><rect x="0.5" y="4.3" width="12" height="3" rx="0.8" fill="#3050c0"/><rect x="1" y="7.3" width="11.5" height="3" rx="0.8" fill="#30a040"/><rect x="1.5" y="10.3" width="11" height="1.5" fill="#d0d0a0"/><rect x="5.8" y="1" width="1.5" height="10.8" fill="#c89060"/></g></svg>
<div class="t" style="left:607.5px;width:400px;text-align:center;top:510.79px;font-size:9.35px;line-height:11.22px;transform:scaleX(0.8772);transform-origin:center center;color:#1a1a1a">Historian</div>
<div class="t" style="left:848.6px;top:509.72px;font-size:9.80px;line-height:11.76px;transform:scaleX(0.8772);transform-origin:left center;color:#1a1a1a">running</div>
<div style="left:913.7px;top:506.3px;width:28.7px;height:16.7px;box-sizing:border-box;background:#fafafa;border:1px solid #ececec"></div>
<div style="left:921.7px;top:508.3px"><svg width="13" height="13" viewBox="0 0 13 13"><circle cx="6.5" cy="6.5" r="6.3" fill="#c4c8e8"/><path d="M5 3.5 L10 6.5 L5 9.5Z" fill="#fff"/></svg></div>
<div style="left:948.6px;top:506.3px;width:28.7px;height:16.7px;box-sizing:border-box;background:#dadada;border:1px solid #7a7a7a"></div>
<div style="left:956.6px;top:508.3px"><svg width="13" height="13" viewBox="0 0 13 13"><defs><radialGradient id="cg" cx="0.5" cy="0.85" r="0.75"><stop offset="0" stop-color="#60a8ff"/><stop offset="0.45" stop-color="#1030c0"/><stop offset="1" stop-color="#000a60"/></radialGradient></defs><circle cx="6.5" cy="6.5" r="6.3" fill="url(#cg)"/><rect x="4.3" y="3.8" width="1.6" height="5.4" fill="#fff"/><rect x="7.1" y="3.8" width="1.6" height="5.4" fill="#fff"/></svg></div>
<div style="left:983.8px;top:506.3px;width:28.7px;height:16.7px;box-sizing:border-box;background:#dadada;border:1px solid #7a7a7a"></div>
<div style="left:991.8px;top:508.3px"><svg width="13" height="13" viewBox="0 0 13 13"><defs><radialGradient id="cg" cx="0.5" cy="0.85" r="0.75"><stop offset="0" stop-color="#60a8ff"/><stop offset="0.45" stop-color="#1030c0"/><stop offset="1" stop-color="#000a60"/></radialGradient></defs><circle cx="6.5" cy="6.5" r="6.3" fill="url(#cg)"/><rect x="4" y="4" width="5" height="5" fill="#fff"/></svg></div>
<svg style="left:774px;top:530px" width="15" height="14" viewBox="0 0 13 13"><ellipse cx="6.2" cy="11.6" rx="5.8" ry="1.3" fill="#d8d8d8"/><path d="M4 1.5 L9.5 0.5 V10.5 L4 11.5Z" fill="#3a3a3a"/><path d="M9.5 0.5 L11 1.3 V11 L9.5 10.5Z" fill="#9a9a9a"/><path d="M4.6 2.2 L9 1.4 V9.8 L4.6 10.6Z" fill="#6a6a6a"/><rect x="4.3" y="8.5" width="1" height="1.2" fill="#30c030"/><path d="M3 11 L8.5 10.5 L9 12.3 L3.5 12.6Z" fill="#f0d020"/></svg>
<div class="t" style="left:607.5px;width:400px;text-align:center;top:533.09px;font-size:9.35px;line-height:11.22px;transform:scaleX(0.8772);transform-origin:center center;color:#1a1a1a">Devices</div>
<div class="t" style="left:848.6px;top:532.02px;font-size:9.80px;line-height:11.76px;transform:scaleX(0.8772);transform-origin:left center;color:#1a1a1a">not running</div>
<div style="left:913.7px;top:528.6px;width:28.7px;height:16.7px;box-sizing:border-box;background:#dadada;border:1px solid #7a7a7a"></div>
<div style="left:921.7px;top:530.6px"><svg width="13" height="13" viewBox="0 0 13 13"><defs><radialGradient id="cg" cx="0.5" cy="0.85" r="0.75"><stop offset="0" stop-color="#60a8ff"/><stop offset="0.45" stop-color="#1030c0"/><stop offset="1" stop-color="#000a60"/></radialGradient></defs><circle cx="6.5" cy="6.5" r="6.3" fill="url(#cg)"/><path d="M5 3.5 L10 6.5 L5 9.5Z" fill="#fff"/></svg></div>
<div style="left:948.6px;top:528.6px;width:28.7px;height:16.7px;box-sizing:border-box;background:#fafafa;border:1px solid #ececec"></div>
<div style="left:956.6px;top:530.6px"><svg width="13" height="13" viewBox="0 0 13 13"><circle cx="6.5" cy="6.5" r="6.3" fill="#c4c8e8"/><rect x="4.3" y="3.8" width="1.6" height="5.4" fill="#fff"/><rect x="7.1" y="3.8" width="1.6" height="5.4" fill="#fff"/></svg></div>
<div style="left:983.8px;top:528.6px;width:28.7px;height:16.7px;box-sizing:border-box;background:#fafafa;border:1px solid #ececec"></div>
<div style="left:991.8px;top:530.6px"><svg width="13" height="13" viewBox="0 0 13 13"><circle cx="6.5" cy="6.5" r="6.3" fill="#c4c8e8"/><rect x="4" y="4" width="5" height="5" fill="#fff"/></svg></div>
<svg style="left:772px;top:553px" width="15" height="14" viewBox="0 0 13 13"><g stroke="#5a6a78" stroke-width="0.5"><path d="M2 9.2 V11 Q6.5 13.2 11 11 V9.2" fill="#a8b4c0"/><ellipse cx="6.5" cy="9.2" rx="4.5" ry="1.6" fill="#dfe6ee"/><path d="M2 5.8 V7.6 Q6.5 9.8 11 7.6 V5.8" fill="#a8b4c0"/><ellipse cx="6.5" cy="5.8" rx="4.5" ry="1.6" fill="#dfe6ee"/><path d="M2 2.4 V4.2 Q6.5 6.4 11 4.2 V2.4" fill="#a8b4c0"/><ellipse cx="6.5" cy="2.4" rx="4.5" ry="1.6" fill="#eef2f6"/></g></svg>
<div class="t" style="left:607px;width:400px;text-align:center;top:555.39px;font-size:9.35px;line-height:11.22px;transform:scaleX(0.8772);transform-origin:center center;color:#1a1a1a">Datasets</div>
<div class="t" style="left:848.6px;top:554.32px;font-size:9.80px;line-height:11.76px;transform:scaleX(0.8772);transform-origin:left center;color:#1a1a1a">running</div>
<div style="left:913.7px;top:550.9px;width:28.7px;height:16.7px;box-sizing:border-box;background:#fafafa;border:1px solid #ececec"></div>
<div style="left:921.7px;top:552.9px"><svg width="13" height="13" viewBox="0 0 13 13"><circle cx="6.5" cy="6.5" r="6.3" fill="#c4c8e8"/><path d="M5 3.5 L10 6.5 L5 9.5Z" fill="#fff"/></svg></div>
<div style="left:948.6px;top:550.9px;width:28.7px;height:16.7px;box-sizing:border-box;background:#dadada;border:1px solid #7a7a7a"></div>
<div style="left:956.6px;top:552.9px"><svg width="13" height="13" viewBox="0 0 13 13"><defs><radialGradient id="cg" cx="0.5" cy="0.85" r="0.75"><stop offset="0" stop-color="#60a8ff"/><stop offset="0.45" stop-color="#1030c0"/><stop offset="1" stop-color="#000a60"/></radialGradient></defs><circle cx="6.5" cy="6.5" r="6.3" fill="url(#cg)"/><rect x="4.3" y="3.8" width="1.6" height="5.4" fill="#fff"/><rect x="7.1" y="3.8" width="1.6" height="5.4" fill="#fff"/></svg></div>
<div style="left:983.8px;top:550.9px;width:28.7px;height:16.7px;box-sizing:border-box;background:#dadada;border:1px solid #7a7a7a"></div>
<div style="left:991.8px;top:552.9px"><svg width="13" height="13" viewBox="0 0 13 13"><defs><radialGradient id="cg" cx="0.5" cy="0.85" r="0.75"><stop offset="0" stop-color="#60a8ff"/><stop offset="0.45" stop-color="#1030c0"/><stop offset="1" stop-color="#000a60"/></radialGradient></defs><circle cx="6.5" cy="6.5" r="6.3" fill="url(#cg)"/><rect x="4" y="4" width="5" height="5" fill="#fff"/></svg></div>
<svg style="left:773px;top:575px" width="15" height="14" viewBox="0 0 13 13"><rect x="2" y="1" width="9" height="11.5" fill="#f0f4f8" stroke="#a0b0c0" stroke-width="0.6"/><rect x="3" y="2" width="7" height="2" fill="#b0c8e0"/><g fill="#7090b0"><rect x="3" y="5" width="1.5" height="1.3"/><rect x="5.7" y="5" width="1.5" height="1.3"/><rect x="8.4" y="5" width="1.5" height="1.3"/><rect x="3" y="7.3" width="1.5" height="1.3"/><rect x="5.7" y="7.3" width="1.5" height="1.3"/><rect x="8.4" y="7.3" width="1.5" height="1.3"/><rect x="3" y="9.6" width="1.5" height="1.3"/><rect x="5.7" y="9.6" width="1.5" height="1.3"/><rect x="8.4" y="9.6" width="1.5" height="1.3"/></g></svg>
<div class="t" style="left:607px;width:400px;text-align:center;top:577.69px;font-size:9.35px;line-height:11.22px;transform:scaleX(0.8772);transform-origin:center center;color:#1a1a1a">Scripts</div>
<div class="t" style="left:848.6px;top:576.62px;font-size:9.80px;line-height:11.76px;transform:scaleX(0.8772);transform-origin:left center;color:#1a1a1a">running</div>
<div style="left:913.7px;top:573.2px;width:28.7px;height:16.7px;box-sizing:border-box;background:#fafafa;border:1px solid #ececec"></div>
<div style="left:921.7px;top:575.2px"><svg width="13" height="13" viewBox="0 0 13 13"><circle cx="6.5" cy="6.5" r="6.3" fill="#c4c8e8"/><path d="M5 3.5 L10 6.5 L5 9.5Z" fill="#fff"/></svg></div>
<div style="left:948.6px;top:573.2px;width:28.7px;height:16.7px;box-sizing:border-box;background:#dadada;border:1px solid #7a7a7a"></div>
<div style="left:956.6px;top:575.2px"><svg width="13" height="13" viewBox="0 0 13 13"><defs><radialGradient id="cg" cx="0.5" cy="0.85" r="0.75"><stop offset="0" stop-color="#60a8ff"/><stop offset="0.45" stop-color="#1030c0"/><stop offset="1" stop-color="#000a60"/></radialGradient></defs><circle cx="6.5" cy="6.5" r="6.3" fill="url(#cg)"/><rect x="4.3" y="3.8" width="1.6" height="5.4" fill="#fff"/><rect x="7.1" y="3.8" width="1.6" height="5.4" fill="#fff"/></svg></div>
<div style="left:983.8px;top:573.2px;width:28.7px;height:16.7px;box-sizing:border-box;background:#dadada;border:1px solid #7a7a7a"></div>
<div style="left:991.8px;top:575.2px"><svg width="13" height="13" viewBox="0 0 13 13"><defs><radialGradient id="cg" cx="0.5" cy="0.85" r="0.75"><stop offset="0" stop-color="#60a8ff"/><stop offset="0.45" stop-color="#1030c0"/><stop offset="1" stop-color="#000a60"/></radialGradient></defs><circle cx="6.5" cy="6.5" r="6.3" fill="url(#cg)"/><rect x="4" y="4" width="5" height="5" fill="#fff"/></svg></div>
<svg style="left:771px;top:597.5px" width="15" height="14" viewBox="0 0 13 13"><rect x="3.5" y="0.5" width="9" height="7" fill="#2a70c8"/><rect x="4.2" y="1.2" width="7.6" height="5.6" fill="#60b0f0"/><rect x="0.5" y="4" width="9" height="6.5" fill="#2060b8"/><rect x="1.2" y="4.7" width="7.6" height="5" fill="#70c0f8"/><rect x="3.5" y="10.5" width="3" height="1.5" fill="#6a6a6a"/><rect x="2" y="12" width="6" height="1" fill="#8a8a8a"/></svg>
<div class="t" style="left:607px;width:400px;text-align:center;top:599.99px;font-size:9.35px;line-height:11.22px;transform:scaleX(0.8772);transform-origin:center center;color:#1a1a1a">Displays</div>
<div class="t" style="left:848.6px;top:598.92px;font-size:9.80px;line-height:11.76px;transform:scaleX(0.8772);transform-origin:left center;color:#1a1a1a">running</div>
<div style="left:913.7px;top:595.5px;width:28.7px;height:16.7px;box-sizing:border-box;background:#fafafa;border:1px solid #ececec"></div>
<div style="left:921.7px;top:597.5px"><svg width="13" height="13" viewBox="0 0 13 13"><circle cx="6.5" cy="6.5" r="6.3" fill="#c4c8e8"/><path d="M5 3.5 L10 6.5 L5 9.5Z" fill="#fff"/></svg></div>
<div style="left:948.6px;top:595.5px;width:28.7px;height:16.7px;box-sizing:border-box;background:#dadada;border:1px solid #7a7a7a"></div>
<div style="left:956.6px;top:597.5px"><svg width="13" height="13" viewBox="0 0 13 13"><defs><radialGradient id="cg" cx="0.5" cy="0.85" r="0.75"><stop offset="0" stop-color="#60a8ff"/><stop offset="0.45" stop-color="#1030c0"/><stop offset="1" stop-color="#000a60"/></radialGradient></defs><circle cx="6.5" cy="6.5" r="6.3" fill="url(#cg)"/><rect x="4.3" y="3.8" width="1.6" height="5.4" fill="#fff"/><rect x="7.1" y="3.8" width="1.6" height="5.4" fill="#fff"/></svg></div>
<div style="left:983.8px;top:595.5px;width:28.7px;height:16.7px;box-sizing:border-box;background:#dadada;border:1px solid #7a7a7a"></div>
<div style="left:991.8px;top:597.5px"><svg width="13" height="13" viewBox="0 0 13 13"><defs><radialGradient id="cg" cx="0.5" cy="0.85" r="0.75"><stop offset="0" stop-color="#60a8ff"/><stop offset="0.45" stop-color="#1030c0"/><stop offset="1" stop-color="#000a60"/></radialGradient></defs><circle cx="6.5" cy="6.5" r="6.3" fill="url(#cg)"/><rect x="4" y="4" width="5" height="5" fill="#fff"/></svg></div>
<svg style="left:772px;top:620px" width="15" height="14" viewBox="0 0 13 13"><path d="M0.5 11 L4 12.8 L12.5 11 L9 9.5Z" fill="#c8ccd4"/><rect x="2" y="1" width="3" height="10.5" fill="#7088a8"/><rect x="2" y="1" width="1" height="10.5" fill="#98b0cc"/><rect x="5.2" y="4.5" width="3" height="7.5" fill="#d83018"/><rect x="8.4" y="3" width="3" height="8.5" fill="#f0a010"/><rect x="8.4" y="3" width="1" height="8.5" fill="#f8c850"/></svg>
<div class="t" style="left:607px;width:400px;text-align:center;top:622.29px;font-size:9.35px;line-height:11.22px;transform:scaleX(0.8772);transform-origin:center center;color:#1a1a1a">Reports</div>
<div class="t" style="left:848.6px;top:621.22px;font-size:9.80px;line-height:11.76px;transform:scaleX(0.8772);transform-origin:left center;color:#1a1a1a">running</div>
<div style="left:913.7px;top:617.8px;width:28.7px;height:16.7px;box-sizing:border-box;background:#fafafa;border:1px solid #ececec"></div>
<div style="left:921.7px;top:619.8px"><svg width="13" height="13" viewBox="0 0 13 13"><circle cx="6.5" cy="6.5" r="6.3" fill="#c4c8e8"/><path d="M5 3.5 L10 6.5 L5 9.5Z" fill="#fff"/></svg></div>
<div style="left:948.6px;top:617.8px;width:28.7px;height:16.7px;box-sizing:border-box;background:#dadada;border:1px solid #7a7a7a"></div>
<div style="left:956.6px;top:619.8px"><svg width="13" height="13" viewBox="0 0 13 13"><defs><radialGradient id="cg" cx="0.5" cy="0.85" r="0.75"><stop offset="0" stop-color="#60a8ff"/><stop offset="0.45" stop-color="#1030c0"/><stop offset="1" stop-color="#000a60"/></radialGradient></defs><circle cx="6.5" cy="6.5" r="6.3" fill="url(#cg)"/><rect x="4.3" y="3.8" width="1.6" height="5.4" fill="#fff"/><rect x="7.1" y="3.8" width="1.6" height="5.4" fill="#fff"/></svg></div>
<div style="left:983.8px;top:617.8px;width:28.7px;height:16.7px;box-sizing:border-box;background:#dadada;border:1px solid #7a7a7a"></div>
<div style="left:991.8px;top:619.8px"><svg width="13" height="13" viewBox="0 0 13 13"><defs><radialGradient id="cg" cx="0.5" cy="0.85" r="0.75"><stop offset="0" stop-color="#60a8ff"/><stop offset="0.45" stop-color="#1030c0"/><stop offset="1" stop-color="#000a60"/></radialGradient></defs><circle cx="6.5" cy="6.5" r="6.3" fill="url(#cg)"/><rect x="4" y="4" width="5" height="5" fill="#fff"/></svg></div></body></html>
